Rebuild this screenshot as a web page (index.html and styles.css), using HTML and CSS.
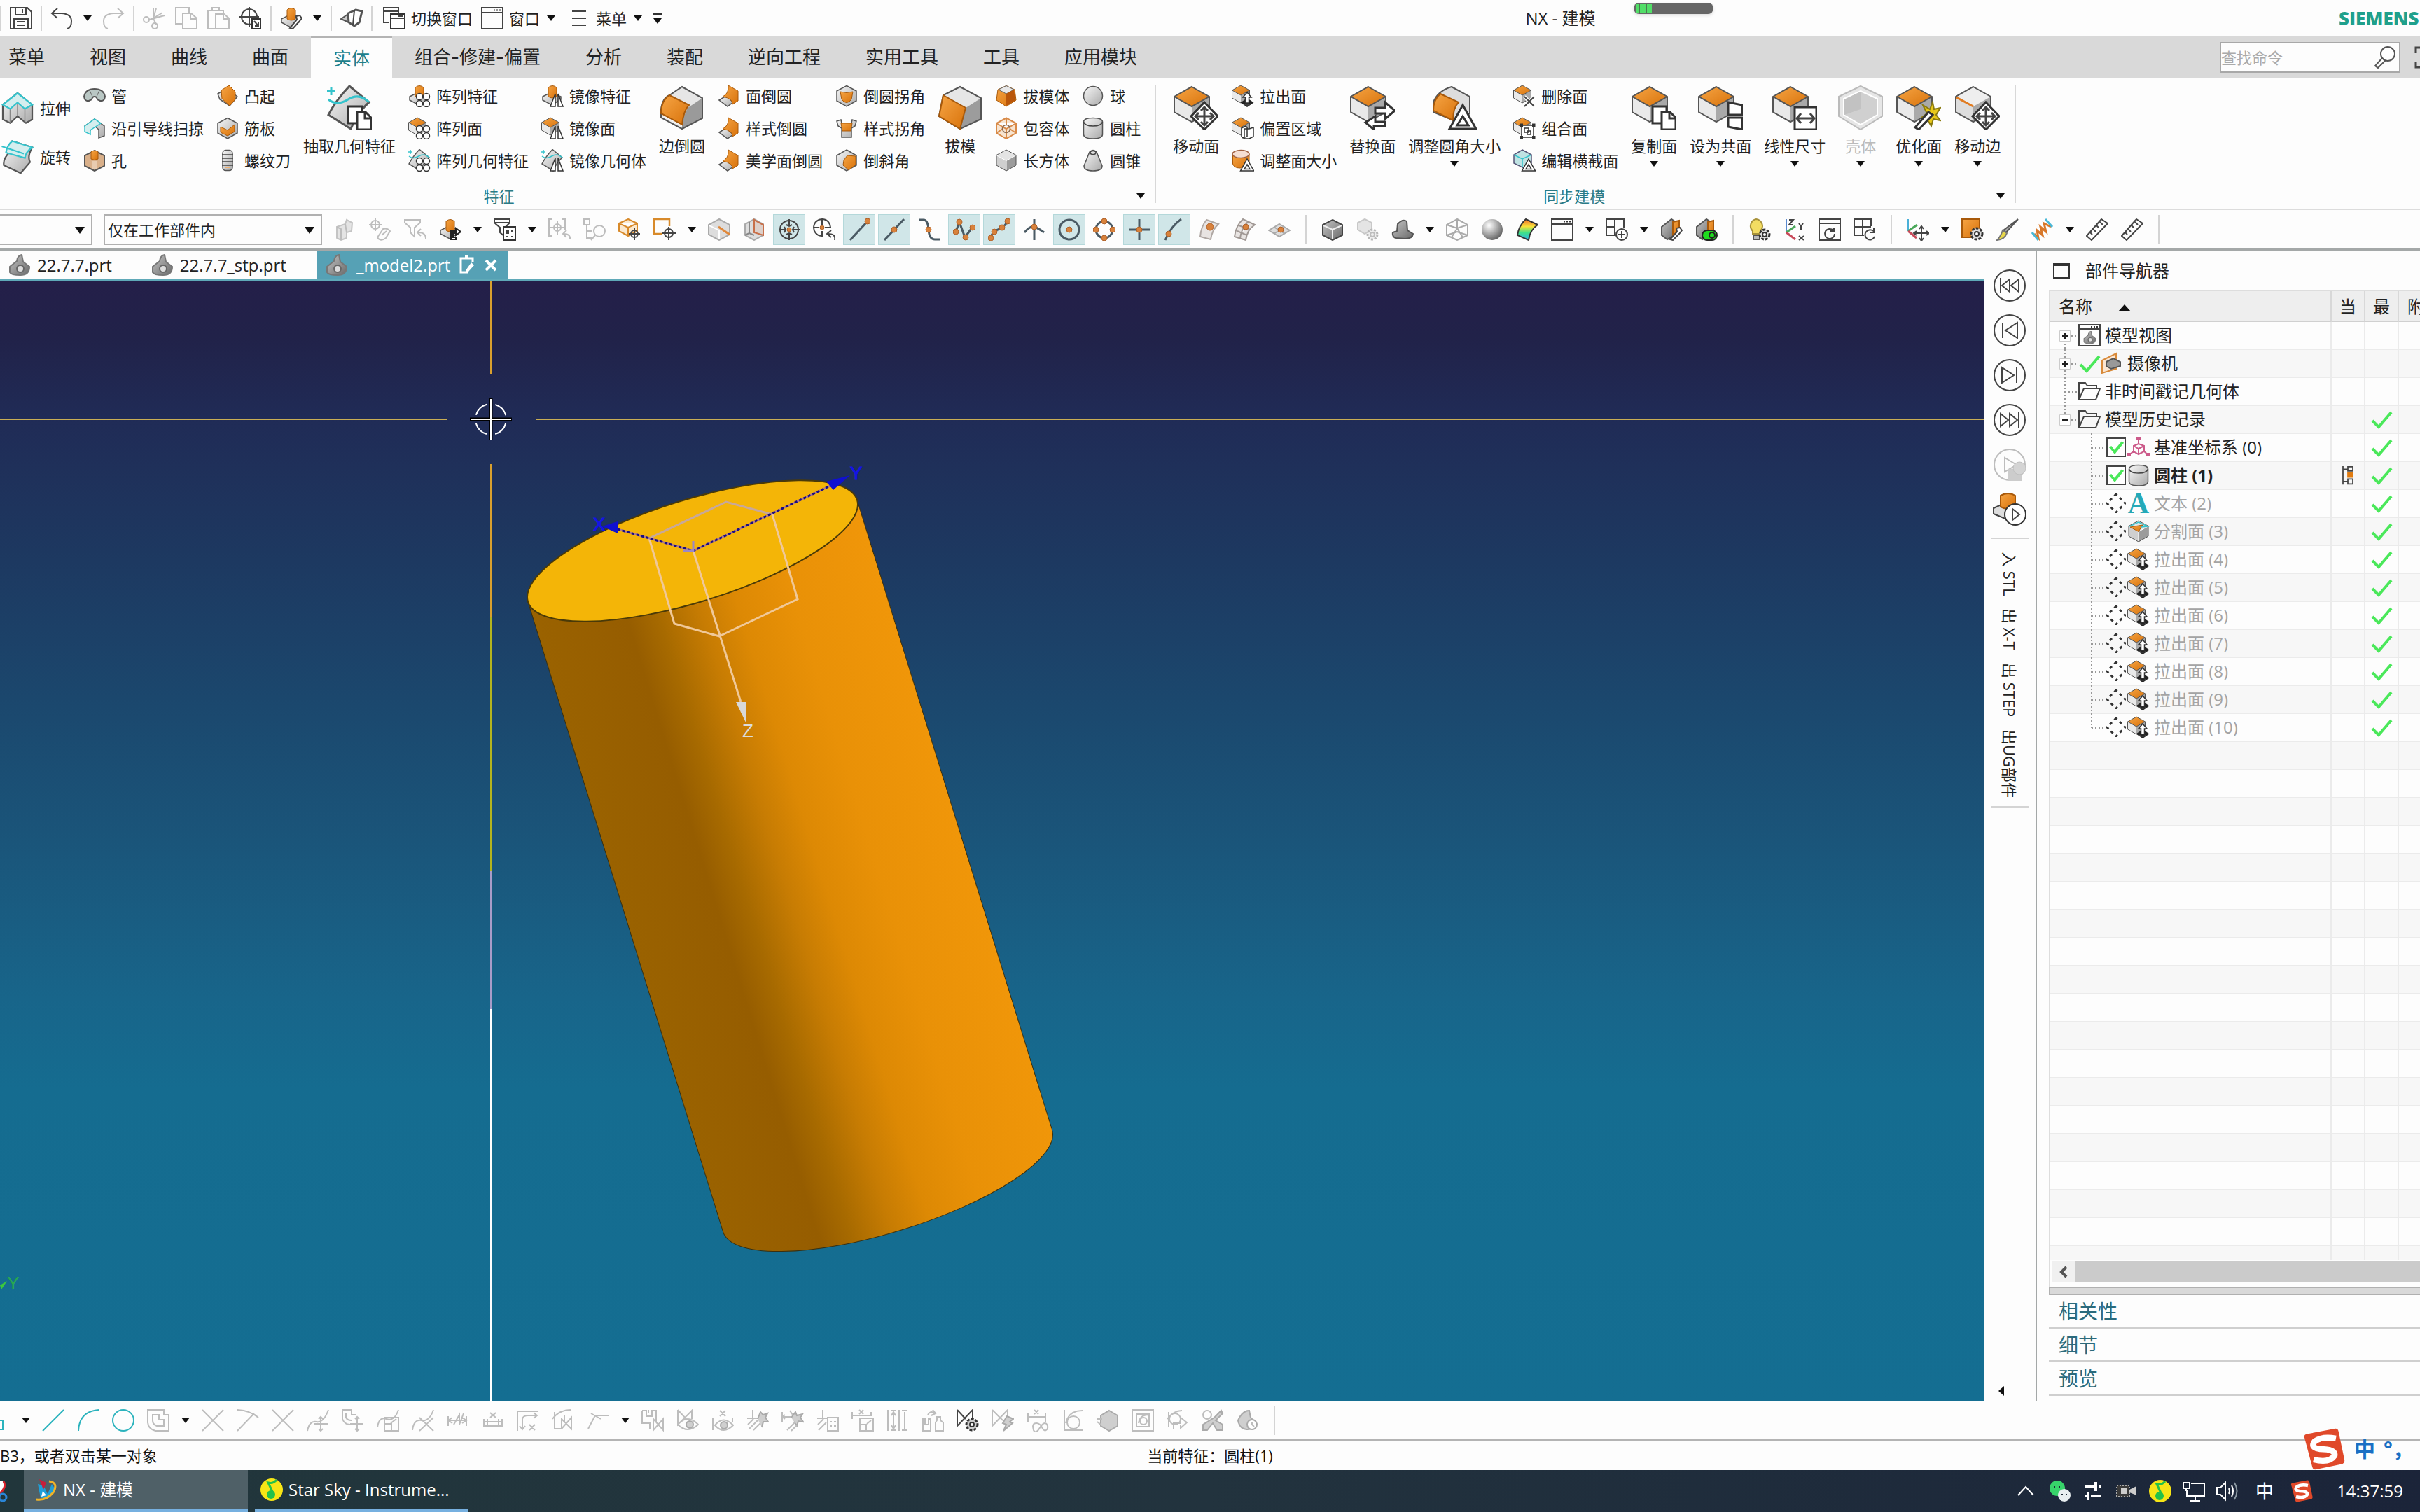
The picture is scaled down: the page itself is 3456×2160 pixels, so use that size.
FILE: index.html
```html
<!DOCTYPE html>
<html lang="zh-CN">
<head>
    <meta charset="UTF-8">
    <meta name="viewport" content="width=device-width, initial-scale=1.0">
    <title>NX - 建模</title>
    <link rel="stylesheet" href="styles.css">
</head>
<body>

    <!-- Icon library -->
    <svg class="defs" aria-hidden="true">
        <defs>
            <linearGradient id="gOrange" x1="0" y1="0" x2="1" y2="1"><stop offset="0" stop-color="#f6a545"/><stop offset="1" stop-color="#d8720a"/></linearGradient>
            <linearGradient id="gGrey" x1="0" y1="0" x2="1" y2="1"><stop offset="0" stop-color="#f8f8f8"/><stop offset="1" stop-color="#a9a9a9"/></linearGradient>
            <linearGradient id="gDark" x1="0" y1="0" x2="1" y2="1"><stop offset="0" stop-color="#c4c4c4"/><stop offset="1" stop-color="#6a6a6a"/></linearGradient>
            <linearGradient id="gRain" x1="0" y1="0" x2="0" y2="1"><stop offset="0" stop-color="#f06a2a"/><stop offset=".35" stop-color="#f7e13a"/><stop offset=".65" stop-color="#3fe08a"/><stop offset="1" stop-color="#2ab0f0"/></linearGradient>
            <radialGradient id="gBall" cx=".35" cy=".3" r=".8"><stop offset="0" stop-color="#fff"/><stop offset="1" stop-color="#555"/></radialGradient>
            <linearGradient id="gBody" x1="0" y1="0" x2="1" y2="0"><stop offset="0" stop-color="#9a6200"/><stop offset=".26" stop-color="#965d00"/><stop offset=".35" stop-color="#a76a00"/><stop offset=".47" stop-color="#c77c03"/><stop offset=".58" stop-color="#dd8904"/><stop offset=".74" stop-color="#e99107"/><stop offset="1" stop-color="#f09609"/></linearGradient>

            <!-- 64 unit feature icons -->
            <symbol id="cube" viewBox="0 0 64 64"><path class="top" d="M26 2 51 16 26 30 1 16z"/><path fill="#e9e9e9" d="M1 16 26 30V52L1 38z"/><path fill="#a9a9a9" d="M51 16 26 30V52L51 38z"/><path class="edge" d="M26 2 51 16V38L26 52 1 38V16zM1 16 26 30 51 16"/></symbol>
            <symbol id="cube-grey" viewBox="0 0 64 64"><path fill="#e4e4e4" d="M32 2 60 17 32 33 4 17z"/><path fill="#cfcfcf" d="M4 17 32 33V62L4 46z"/><path fill="#9c9c9c" d="M60 17 32 33V62L60 46z"/><path class="edge" d="M32 2 60 17V46L32 62 4 46V17z"/><path fill="none" stroke="#fff" stroke-width="2" d="M5 18 32 33 59 18M32 33V60"/></symbol>
            <symbol id="o-move" viewBox="0 0 64 64"><path class="ov" d="M44 24 63 44 44 63 25 44z"/><path class="k3" d="M44 31V57M31 44H57M39 36 44 31 49 36M39 52 44 57 49 52M36 39 31 44 36 49M52 39 57 44 52 49"/></symbol>
            <symbol id="o-pull" viewBox="0 0 64 64"><path fill="#222" d="M44 38 63 51 44 64 25 51z"/><path class="ov" d="M44 22 56 36H49V52H39V36H32z"/><path class="k3" d="M34 54Q44 62 54 54"/></symbol>
            <symbol id="o-copy" viewBox="0 0 64 64"><path class="ov" d="M30 30H50V54H30z"/><path class="ov" d="M43 38H55L63 46V63H43zM54 38V47H63"/></symbol>
            <symbol id="o-tri" viewBox="0 0 64 64"><path class="ov" d="M44 28 63 62H25z"/><path class="ov" d="M44 44 52 57H36z"/></symbol>
            <symbol id="o-grid" viewBox="0 0 64 64"><g class="ov"><circle cx="32" cy="34" r="9"/><circle cx="52" cy="34" r="9"/><circle cx="32" cy="54" r="9"/><circle cx="52" cy="54" r="9"/></g></symbol>
            <symbol id="o-mirror" viewBox="0 0 64 64"><path class="ov" d="M40 26V62H26zM48 26V62H62z"/></symbol>
            <symbol id="o-x" viewBox="0 0 64 64"><path stroke="#fff" stroke-width="10" d="M32 34 60 62M60 34 32 62"/><path stroke="#444" stroke-width="4" d="M32 34 60 62M60 34 32 62"/></symbol>
            <symbol id="boss" viewBox="0 0 64 64"><path class="grey" d="M4 34 28 22 56 34V42L30 58 4 44z"/><path class="org" d="M20 8Q32 -2 44 8V34Q32 42 20 34z"/></symbol>
            <symbol id="sheet" viewBox="0 0 64 64"><path class="grey" d="M2 42Q12 22 32 1L60 24Q44 38 34 62z"/><path class="cy" d="M6 2V14M0 8H12M2 20Q14 30 30 20T60 24"/></symbol>

            <symbol id="f-extrude" viewBox="0 0 64 64"><path class="grey" d="M4 26 32 4 60 26V54L48 61 32 48 18 61 4 54z"/><path fill="none" stroke="#888" stroke-width="2" d="M18 34V60M46 34V60M32 22V48"/><path class="cyf" d="M4 26 32 4 60 26 46 34 32 22 18 34z"/></symbol>
            <symbol id="f-revolve" viewBox="0 0 64 64"><path class="grey" d="M22 2 60 14Q50 32 56 42L38 63 6 48Q4 36 16 24z"/><path class="cyf" d="M22 2 60 14Q48 22 46 34L10 24Q12 10 22 2z"/><path class="cy" d="M2 12 44 26"/></symbol>
            <symbol id="f-tube" viewBox="0 0 64 64"><path fill="#b9c7c4" stroke="#555" stroke-width="4" d="M2 34Q6 12 32 12T62 34Q60 48 48 46L40 42Q38 34 32 34T24 42L16 46Q4 48 2 34z"/><path class="k2" d="M18 16 26 34M46 16 38 34"/></symbol>
            <symbol id="f-sweep" viewBox="0 0 64 64"><path class="grey" d="M4 26 32 6 60 26V54L44 60V36L32 26 20 38z"/><path class="cyf" d="M4 26 32 6 50 18 20 38V50L4 42z"/></symbol>
            <symbol id="f-hole" viewBox="0 0 64 64"><path fill="#d9b08a" stroke="#555" stroke-width="4" d="M32 4 60 18V48L32 62 4 48V18z"/><path class="org" d="M22 8Q32 0 42 8V28Q32 34 22 28z"/><path fill="#e8cbb0" d="M24 34H40V58H24z"/></symbol>
            <symbol id="f-emboss" viewBox="0 0 64 64"><path class="grey" d="M4 26 30 10 60 34 38 60 10 42z"/><path class="org" d="M14 16 36 2 54 20V42L38 60 16 40z"/></symbol>
            <symbol id="f-rib" viewBox="0 0 64 64"><path class="grey" d="M32 3 60 18V46L32 62 4 46V18z"/><path class="org" d="M12 28 32 38 52 22V42L32 54 12 44z"/></symbol>
            <symbol id="f-thread" viewBox="0 0 64 64"><rect class="grey" x="18" y="3" width="28" height="58" rx="9"/><path class="k3" d="M16 16H48M16 26H48M16 36H48M16 46H48"/><path stroke="#f0b070" stroke-width="4" d="M24 52H40"/></symbol>
            <symbol id="f-extract" viewBox="0 0 64 64"><use href="#sheet"/><use href="#o-copy"/></symbol>
            <symbol id="f-patf" viewBox="0 0 64 64"><use href="#boss"/><use href="#o-grid"/></symbol>
            <symbol id="f-pats" viewBox="0 0 64 64"><use href="#cube"/><use href="#o-grid"/></symbol>
            <symbol id="f-patg" viewBox="0 0 64 64"><use href="#sheet"/><use href="#o-grid"/></symbol>
            <symbol id="f-mirf" viewBox="0 0 64 64"><use href="#boss"/><use href="#o-mirror"/></symbol>
            <symbol id="f-mirs" viewBox="0 0 64 64"><use href="#cube"/><use href="#o-mirror"/></symbol>
            <symbol id="f-mirg" viewBox="0 0 64 64"><use href="#sheet"/><use href="#o-mirror"/></symbol>
            <symbol id="f-eblend" viewBox="0 0 64 64"><path fill="#e6e6e6" d="M32 2 61 18 40 32 14 14z"/><path fill="#9a9a9a" d="M61 18V47L32 62V50L40 32z"/><path fill="#eee" d="M2 42 32 58V62L2 46z"/><path class="edge" d="M32 2 61 18V47L32 62 2 46V34Q4 18 14 14z"/><path class="org" d="M14 14 42 28Q34 36 32 56L2 40Q2 22 14 14z"/></symbol>
            <symbol id="f-fblend" viewBox="0 0 64 64"><path class="grey" d="M4 44 24 32 44 50 28 62z"/><path class="org" d="M30 2 58 18V46L42 56Q44 40 14 34 32 26 30 2z"/></symbol>
            <symbol id="f-cblend" viewBox="0 0 64 64"><path class="grey" d="M32 3 60 18V46L32 62 4 46V18z"/><path class="org" d="M14 20Q32 26 50 20L46 42Q32 60 18 42z"/></symbol>
            <symbol id="f-scorner" viewBox="0 0 64 64"><path class="grey" d="M4 12 16 8 18 18H46L48 8 60 12 56 26 46 32V58H18V32L8 26z"/><path class="org" d="M16 18H48L44 40H20z"/></symbol>
            <symbol id="f-chamfer" viewBox="0 0 64 64"><path class="grey" d="M32 2 60 18V46L32 62 4 46V18z"/><path class="org" d="M34 18 58 20V44L38 60 22 46 24 32z"/></symbol>
            <symbol id="f-draft" viewBox="0 0 64 64"><path fill="#e6e6e6" d="M32 2 62 18 40 32 8 14z"/><path fill="#9c9c9c" d="M62 18V48L32 62 40 32z"/><path class="edge" d="M32 2 62 18V48L32 62 2 44 8 14z"/><path class="org" d="M8 14 40 32 32 62 2 44z"/></symbol>
            <symbol id="f-dbody" viewBox="0 0 64 64"><path class="org" d="M32 3 56 14 60 44 32 62 4 44 8 14z"/><path fill="#e8e8e8" stroke="#666" stroke-width="2" d="M32 3 54 14 32 26 10 14z"/><path fill="#b9560a" d="M32 26 54 14 58 44 32 60z"/></symbol>
            <symbol id="f-bound" viewBox="0 0 64 64"><path fill="#f7e4d0" stroke="#d88a48" stroke-width="4" d="M32 3 60 18V46L32 62 4 46V18zM4 18 32 34 60 18M32 34V62M32 3V24M4 46 22 34M60 46 42 34"/><circle cx="32" cy="34" r="11" fill="none" stroke="#8a6a50" stroke-width="3"/></symbol>
            <symbol id="f-sphere" viewBox="0 0 64 64"><circle class="grey" cx="32" cy="32" r="27"/></symbol>
            <symbol id="f-cyl" viewBox="0 0 64 64"><path class="grey" d="M5 14Q5 3 32 3T59 14V50Q59 62 32 62T5 50z"/><path class="k3" d="M5 14Q8 26 32 26T59 14"/></symbol>
            <symbol id="f-cone" viewBox="0 0 64 64"><path class="grey" d="M22 8Q32 -2 42 8L58 48Q58 62 32 62T6 48z"/><ellipse class="k3" cx="32" cy="10" rx="8" ry="5"/></symbol>

            <symbol id="f-move" viewBox="0 0 64 64"><use href="#cube"/><use href="#o-move"/></symbol>
            <symbol id="f-pull" viewBox="0 0 64 64"><use href="#cube"/><use href="#o-pull"/></symbol>
            <symbol id="f-offset" viewBox="0 0 64 64"><use href="#cube"/><path class="ov" d="M28 32 40 26 44 30V56L32 60 28 56zM36 34H50L62 30V56L50 62H36z"/></symbol>
            <symbol id="f-resize" viewBox="0 0 64 64"><path class="org" d="M3 14V42Q6 54 24 54T50 42V14z"/><ellipse cx="26" cy="14" rx="24" ry="11" fill="#f5ded2" stroke="#a06040" stroke-width="3"/><use href="#o-tri"/></symbol>
            <symbol id="f-replace" viewBox="0 0 64 64"><use href="#cube"/><path class="ov" d="M36 32H50V24L64 36 50 48V40H36zM50 52H36V44L22 53 34 63V58H50z"/></symbol>
            <symbol id="f-rblend" viewBox="0 0 64 64"><path fill="#ddd" d="M28 2 54 16V40L36 52 2 38V24Q8 8 28 2z"/><path class="edge" d="M28 2 54 16V40L36 52 2 38V24Q8 8 28 2z"/><path class="org" d="M12 12 38 24Q30 32 30 50L2 36Q2 20 12 12z"/><use href="#o-tri"/></symbol>
            <symbol id="f-delete" viewBox="0 0 64 64"><use href="#cube"/><use href="#o-x"/></symbol>
            <symbol id="f-group" viewBox="0 0 64 64"><use href="#cube"/><path class="ov" d="M24 24H58V58H24z"/><path class="ov" d="M32 32H44V44H32zM40 40H50V50H40z"/><path fill="#333" d="M19 19h9v9h-9zM54 19h9v9h-9zM19 54h9v9h-9zM54 54h9v9h-9z"/></symbol>
            <symbol id="f-section" viewBox="0 0 64 64"><path fill="#bfe3e3" stroke="#557" stroke-width="3" d="M26 2 52 16V40L30 54 2 40V16z"/><path class="cy" d="M2 16 26 28 52 16M26 28V52"/><use href="#o-tri"/></symbol>
            <symbol id="f-copy" viewBox="0 0 64 64"><use href="#cube"/><use href="#o-copy"/></symbol>
            <symbol id="f-coplanar" viewBox="0 0 64 64"><use href="#cube"/><path class="ov" d="M43 24 63 28V42H43zM43 46H63V63L43 59z"/></symbol>
            <symbol id="f-dim" viewBox="0 0 64 64"><use href="#cube"/><path class="ov" d="M32 31H63V63H32z"/><path class="k3" d="M35 47H60M41 40 35 47 41 54M54 40 60 47 54 54"/></symbol>
            <symbol id="f-shell" viewBox="0 0 64 64"><path fill="#e6e6e6" stroke="#bbb" stroke-width="2" d="M32 1 63 16V44L32 63 1 44V16z"/><path fill="#d0d0d0" stroke="#fff" stroke-width="2" d="M32 8 56 19V42L32 56 8 42V19z"/><path fill="#c2c2c2" d="M32 9V34L9 42V20z"/></symbol>
            <symbol id="f-optim" viewBox="0 0 64 64"><use href="#cube"/><path fill="#e8c81a" stroke="#8a7a10" stroke-width="2" d="M52 24 54 34 63 32 57 42 63 50 53 48 50 58 44 48 36 46 44 40 38 28 48 34z"/><path class="ov" d="M46 38 52 42 32 63 27 60z"/></symbol>
            <symbol id="f-medge" viewBox="0 0 64 64"><path fill="#eee" d="M26 2 51 16 26 30 1 16z"/><path fill="#ddd" d="M1 16 26 30V52L1 38z"/><path fill="#a9a9a9" d="M51 16 26 30V52L51 38z"/><path class="edge" d="M26 2 51 16V38L26 52 1 38V16z"/><path stroke="#e07b20" stroke-width="3" d="M2 17 26 30"/><use href="#o-move"/></symbol>
            <symbol id="f-divide" viewBox="0 0 64 64"><use href="#cube-grey"/><path class="org" d="M8 20 44 14 32 33z"/><path class="cy" d="M6 18 32 6 58 18 40 20"/></symbol>

            <!-- 32 unit line icons -->
            <symbol id="i-save" viewBox="0 0 32 32"><path class="l" d="M1 1H25L31 7V31H1z"/><path class="l" d="M8 1V11H23V1M18 3V8M6 31V17H26V31M10 21H22M10 26H22"/></symbol>
            <symbol id="i-undo" viewBox="0 0 32 32"><path class="l" d="M10 2 2 9 10 16M2 9H16Q30 10 30 20T24 31"/></symbol>
            <symbol id="i-redo" viewBox="0 0 32 32"><path class="l" d="M22 2 30 9 22 16M30 9H16Q2 10 2 20T8 31"/></symbol>
            <symbol id="i-cut" viewBox="0 0 32 32"><path class="l" d="M15 1V16L19 25M31 12 9 18"/><circle class="l" cx="5" cy="18" r="4"/><circle class="l" cx="17" cy="27" r="4"/><path class="l" d="M19 2 15 16 28 8"/></symbol>
            <symbol id="i-copy" viewBox="0 0 32 32"><path class="l" d="M20 8V1H1V24H11M11 9H23L31 16V31H11zM22 9V17H31"/></symbol>
            <symbol id="i-paste" viewBox="0 0 32 32"><path class="l" d="M11 31H1V5H23V9M7 5V1H17V5M12 10H24L31 16V31H12zM23 10V17H31"/></symbol>
            <symbol id="i-target" viewBox="0 0 32 32"><circle class="l" cx="14" cy="14" r="11"/><path class="l" d="M14 0V28M0 14H28"/><path d="M18 17H30V31H18z" fill="#fff" stroke="#333" stroke-width="2"/><path class="l" d="M21 20 27 27M27 22V27H22"/></symbol>
            <symbol id="i-bosswrench" viewBox="0 0 32 32"><use href="#boss" width="32" height="32"/><path fill="#fff" stroke="#444" stroke-width="2" d="M14 30 24 18 23 13 28 12 31 16 27 21 18 31z"/></symbol>
            <symbol id="i-pin" viewBox="0 0 32 32"><path fill="#ccc" stroke="#555" stroke-width="2" d="M1 17 11 10 12 22z"/><path fill="#fff" stroke="#555" stroke-width="3" d="M11 9 22 4 31 6 27 22 20 27 12 22z"/><path class="l" d="M20 5 18 25"/></symbol>
            <symbol id="i-windows" viewBox="0 0 32 32"><path class="l" d="M9 22H1V1H22V9M1 6H22"/><path d="M11 10H31V31H11z" fill="#fff" stroke="#333" stroke-width="2"/><path class="l" d="M11 16H31M22 13H29"/></symbol>
            <symbol id="i-window" viewBox="0 0 32 32"><path class="l" d="M1 1H31V31H1zM1 8H31"/><path class="d" d="M18 4.500H28"/></symbol>
            <symbol id="i-menu" viewBox="0 0 32 32"><path class="l" d="M6 6H26M6 16H26M6 26H26"/></symbol>
            <symbol id="i-cubes" viewBox="0 0 32 32"><path fill="#e4e4e4" stroke="#c4c4c4" stroke-width="2" d="M4 12 16 8 18 2 26 6 25 18 18 20V28L10 31 4 28z"/><path class="l" d="M16 8 18 20M4 12 10 15V31"/></symbol>
            <symbol id="i-link" viewBox="0 0 32 32"><circle class="l" cx="9" cy="9" r="6"/><path class="l" d="M9 0V18M0 9H18M12 27 20 15Q26 13 30 18L24 28Q16 34 12 27zM18 24 25 18"/></symbol>
            <symbol id="i-funnel" viewBox="0 0 32 32"><path class="l" d="M1 2H23V6L15 13V26L9 20V13L1 6zM31 30Q32 20 20 20M24 15 19 20 24 25"/></symbol>
            <symbol id="i-bossredo" viewBox="0 0 32 32"><use href="#boss" width="32" height="32"/><path fill="#fff" stroke="#222" stroke-width="2" d="M24 30H17V18H24V14L31 19 24 24V21H20V27H24z"/></symbol>
            <symbol id="i-funnellist" viewBox="0 0 32 32"><path class="l" d="M1 1H23V6L16 13V26L9 20V13L1 6zM1 6H23"/><path fill="#fff" stroke="#333" stroke-width="2" d="M14 12H31V31H14z"/><path class="l" d="M18 18H21V21H18zM18 26H21M25 18H28M25 26H28"/></symbol>
            <symbol id="i-brackets" viewBox="0 0 32 32"><path class="l" d="M5 1H1V25H5M20 1H24V16M13 3V24M3 13H22M31 30Q32 22 22 22M26 17 21 22 26 27"/><circle class="l" cx="13" cy="13" r="5"/></symbol>
            <symbol id="i-treefind" viewBox="0 0 32 32"><path class="l" d="M1 1H9V9H1zM5 9V28H12M5 18H12"/><circle class="l" cx="23" cy="18" r="8"/><path class="l" d="M17 24 11 31"/></symbol>
            <symbol id="i-cubecross" viewBox="0 0 32 32"><path fill="#fbe9cf" stroke="#d88a2a" stroke-width="2" d="M14 1 27 7V18L14 25 1 18V7zM1 7 14 13 27 7M14 13V25"/><path class="l" d="M23 14V31M15 22H31"/><circle class="l" cx="23" cy="22" r="5"/></symbol>
            <symbol id="i-rectcross" viewBox="0 0 32 32"><path fill="none" stroke="#d88a2a" stroke-width="2.500" d="M13 22H1V1H23V11"/><path class="l" d="M22 12V31M12 21H32"/><circle class="l" cx="22" cy="21" r="6"/></symbol>
            <symbol id="i-cubeline" viewBox="0 0 32 32"><path fill="#ddd" stroke="#aaa" stroke-width="2" d="M16 1 31 9V23L16 31 1 23V9z"/><path fill="none" stroke="#fff" stroke-width="2" d="M2 10 16 17V30"/><path stroke="#e0883a" stroke-width="3" d="M15 12 31 23"/></symbol>
            <symbol id="i-cubeface" viewBox="0 0 32 32"><path fill="#ddd" stroke="#aaa" stroke-width="2" d="M16 1 29 8V24L16 31 3 24V8z"/><path fill="none" stroke="#888" stroke-width="2" d="M9 5V21L3 24M9 21 16 24"/><path fill="#ddd0ca" stroke="#c8704a" stroke-width="2" d="M16 2 29 9V24L16 20z"/></symbol>
            <symbol id="i-snap" viewBox="0 0 32 32"><circle class="l" cx="16" cy="16" r="13"/><path class="l" d="M16 1V11M16 21V31M1 16H11M21 16H31M9 12 11 16 9 20M23 12 21 16 23 20M12 9 16 11 20 9M12 23 16 21 20 23"/><circle class="o" cx="16" cy="16" r="3"/></symbol>
            <symbol id="i-snapundo" viewBox="0 0 32 32"><path class="l" d="M25 14A12 12 0 1 0 12 25M13 1V9M13 18V26M1 13H9M17 13H26"/><circle class="o" cx="13" cy="13" r="3"/><path class="l" d="M31 31Q33 22 22 22M26 17 20 22 26 27"/></symbol>
            <symbol id="i-end" viewBox="0 0 32 32"><path class="b" d="M3 31 28 4"/><circle class="o" cx="28" cy="4" r="4"/></symbol>
            <symbol id="i-mid" viewBox="0 0 32 32"><path class="b" d="M2 31 30 1"/><circle class="o" cx="16" cy="16" r="4"/></symbol>
            <symbol id="i-ctrl" viewBox="0 0 32 32"><path class="b" d="M1 2H8Q14 2 15 16T24 30H31"/><circle class="o" cx="15" cy="16" r="4"/></symbol>
            <symbol id="i-poly" viewBox="0 0 32 32"><path class="b" d="M4 19 9 5 17 27 28 12"/><circle class="o" cx="9" cy="5" r="4"/><circle class="o" cx="4" cy="19" r="4"/><circle class="o" cx="18" cy="27" r="4"/><circle class="o" cx="28" cy="13" r="4"/></symbol>
            <symbol id="i-spline" viewBox="0 0 32 32"><path class="b" d="M4 28Q6 18 14 16T28 4"/><circle class="o" cx="4" cy="28" r="4"/><circle class="o" cx="9" cy="19" r="4"/><circle class="o" cx="20" cy="13" r="4"/><circle class="o" cx="28" cy="4" r="4"/></symbol>
            <symbol id="i-inter" viewBox="0 0 32 32"><path class="b" d="M2 20Q10 10 16 12T30 20M16 1V31"/><circle class="o" cx="16" cy="12" r="4"/></symbol>
            <symbol id="i-center" viewBox="0 0 32 32"><circle class="b" cx="16" cy="16" r="14"/><circle class="o" cx="16" cy="16" r="4"/></symbol>
            <symbol id="i-quad" viewBox="0 0 32 32"><circle class="b" cx="16" cy="16" r="12"/><circle class="o" cx="16" cy="4" r="4"/><circle class="o" cx="16" cy="28" r="4"/><circle class="o" cx="4" cy="16" r="4"/><circle class="o" cx="28" cy="16" r="4"/></symbol>
            <symbol id="i-cross" viewBox="0 0 32 32"><path class="b" d="M16 1V31M1 16H31"/><circle class="o" cx="16" cy="16" r="4"/></symbol>
            <symbol id="i-tan" viewBox="0 0 32 32"><path class="b" d="M3 31Q12 10 26 1"/><circle class="o" cx="8" cy="22" r="4"/></symbol>
            <symbol id="i-face1" viewBox="0 0 32 32"><path fill="#e8e4e2" stroke="#b0a8a4" stroke-width="2" d="M3 26Q4 12 12 2L29 8Q20 16 18 30z"/><circle class="o" cx="17" cy="12" r="5"/></symbol>
            <symbol id="i-face2" viewBox="0 0 32 32"><path fill="#e8e4e2" stroke="#a09894" stroke-width="2" d="M2 26Q4 10 14 1L31 9Q20 16 18 31zM8 10 25 16M6 18 20 24M21 5Q12 14 10 28"/><circle class="o" cx="18" cy="12" r="4"/></symbol>
            <symbol id="i-face3" viewBox="0 0 32 32"><path fill="#ddd" stroke="#aaa" stroke-width="2" d="M1 17 16 8 31 17 16 26zM8 12 24 22M24 12 8 22"/><circle class="o" cx="18" cy="16" r="4"/></symbol>
            <symbol id="i-cubedark" viewBox="0 0 32 32"><path fill="url(#gDark)" stroke="#444" stroke-width="2" d="M16 2 30 9V24L16 31 2 24V9z"/><path fill="none" stroke="#eee" stroke-width="2" d="M3 10 16 16 29 10M16 16V29"/></symbol>
            <symbol id="i-cubegear" viewBox="0 0 32 32"><path fill="#e4e4e4" stroke="#c8c8c8" stroke-width="2" d="M12 1 22 6V16L12 22 2 16V6z"/><circle fill="#eee" stroke="#b8b8b8" stroke-width="3" stroke-dasharray="3 2" cx="23" cy="23" r="7"/><circle class="l" cx="23" cy="23" r="3"/></symbol>
            <symbol id="i-seat" viewBox="0 0 32 32"><path fill="url(#gDark)" stroke="#555" stroke-width="2" d="M9 8Q16 0 22 4L23 17 31 22Q30 29 20 29L6 28Q1 26 2 20L8 18z"/></symbol>
            <symbol id="i-wire" viewBox="0 0 32 32"><path class="l" d="M16 1 31 9V24L16 31 1 24V9zM1 9 16 14 31 9M16 1V14M16 14 8 27M16 14 24 27M1 24 16 19 31 24"/></symbol>
            <symbol id="i-ball" viewBox="0 0 32 32"><circle cx="16" cy="16" r="15" fill="url(#gBall)"/></symbol>
            <symbol id="i-rain" viewBox="0 0 32 32"><path fill="url(#gRain)" stroke="#333" stroke-width="2" d="M2 24Q4 10 14 1L31 9Q20 16 18 31z"/></symbol>
            <symbol id="i-gridplus" viewBox="0 0 32 32"><path class="l" d="M15 24H1V1H26V13M13 1V24M1 12H14"/><circle cx="23" cy="23" r="8" fill="#fff" stroke="#444" stroke-width="2"/><path class="l" d="M23 18V28M18 23H28"/></symbol>
            <symbol id="i-clip" viewBox="0 0 32 32"><path fill="url(#gDark)" stroke="#555" stroke-width="2" d="M2 12 16 1 22 5V24L10 30 2 24z"/><path class="org" d="M18 5 27 3V20L18 24z"/><path fill="#fff" stroke="#444" stroke-width="2" d="M14 30 24 19 23 14 28 13 31 17 27 22 18 31z"/></symbol>
            <symbol id="i-clipon" viewBox="0 0 32 32"><path fill="url(#gDark)" stroke="#555" stroke-width="2" d="M2 12 16 1 22 5V24L10 30 2 24z"/><path class="org" d="M18 5 26 3V20L18 24z"/><rect x="10" y="17" width="21" height="14" rx="7" fill="#1fdc1f" stroke="#222" stroke-width="2"/><circle cx="24" cy="24" r="4" fill="#1fdc1f" stroke="#222" stroke-width="2"/></symbol>
            <symbol id="i-bulb" viewBox="0 0 32 32"><path fill="#f3dc62" stroke="#a8923a" stroke-width="2" d="M11 1A10 10 0 0 1 17 18V22H6V18A10 10 0 0 1 11 1z"/><path fill="#bbb" stroke="#555" stroke-width="2" d="M7 24H16V30H7z"/><circle cx="23" cy="23" r="7" fill="#ddd" stroke="#333" stroke-width="3" stroke-dasharray="4 2"/><circle cx="23" cy="23" r="3" fill="#fff" stroke="#333" stroke-width="2"/></symbol>
            <symbol id="i-csys" viewBox="0 0 32 32"><path fill="none" stroke="#5a8ad0" stroke-width="2" d="M4 1V20"/><path fill="none" stroke="#4aa85a" stroke-width="3" d="M4 20 17 11"/><path fill="none" stroke="#c84a5a" stroke-width="3" d="M4 20 17 30"/><path class="l" d="M8 2H14L8 9H14M22 7 25 11 28 7M25 11V16M22 25 29 31M29 25 22 31"/></symbol>
            <symbol id="i-winrot" viewBox="0 0 32 32"><path class="l" d="M1 1H31V31H1zM1 7H31M22 13V18H17M21 17A7 7 0 1 0 23 22"/></symbol>
            <symbol id="i-gridrot" viewBox="0 0 32 32"><path class="l" d="M15 24H1V1H25V11M13 1V24M1 12H25M29 14V20H23M28 18A7 7 0 1 0 30 26"/></symbol>
            <symbol id="i-csysmove" viewBox="0 0 32 32"><path fill="none" stroke="#4ab0d8" stroke-width="2" d="M2 1V18"/><path fill="none" stroke="#4aa85a" stroke-width="3" d="M2 18 15 9"/><path fill="none" stroke="#c84a5a" stroke-width="3" d="M2 18 14 28"/><path class="l" d="M21 12V31M11 21H31M18 15 21 11 24 15M18 28 21 32 24 28M14 18 10 21 14 24M28 18 32 21 28 24"/></symbol>
            <symbol id="i-facegear" viewBox="0 0 32 32"><path class="org" d="M1 1H26V27H1z"/><circle cx="22" cy="22" r="8" fill="#ddd" stroke="#333" stroke-width="3" stroke-dasharray="4 2"/><circle cx="22" cy="22" r="3" fill="#fff" stroke="#333" stroke-width="2"/></symbol>
            <symbol id="i-brush" viewBox="0 0 32 32"><path fill="#aaa" stroke="#555" stroke-width="2" d="M31 1 14 20 10 17z"/><path fill="#e8d84a" stroke="#777" stroke-width="2" d="M9 17 15 21Q12 30 1 31 6 26 9 17z"/></symbol>
            <symbol id="i-spring" viewBox="0 0 32 32"><path fill="none" stroke="#d8782a" stroke-width="3" d="M4 22 10 28 8 17 16 24 13 12 21 19 18 7 28 12"/><path fill="none" stroke="#49b8d8" stroke-width="3" d="M1 20 10 31M20 1 30 12"/></symbol>
            <symbol id="i-ruler" viewBox="0 0 32 32"><path class="l" d="M22 1 31 7 8 31 1 25zM20 5 24 9M15 10 18 13M10 15 14 19M6 20 9 23"/></symbol>

            <!-- sketch tools -->
            <symbol id="k-rect" viewBox="0 0 32 32"><path class="l" d="M1 16H22V29H1z"/></symbol>
            <symbol id="k-line" viewBox="0 0 32 32"><path class="l" d="M1 31 31 1"/></symbol>
            <symbol id="k-arc" viewBox="0 0 32 32"><path class="l" d="M2 31Q3 3 31 1"/></symbol>
            <symbol id="k-circle" viewBox="0 0 32 32"><circle class="l" cx="16" cy="16" r="15"/></symbol>
            <symbol id="k-offset" viewBox="0 0 32 32"><path class="l" d="M1 1H24V8H31V31H12Q1 28 1 18zM8 8H17V15H24V24H14Q8 22 8 16z"/></symbol>
            <symbol id="k-trim" viewBox="0 0 32 32"><path class="l" d="M1 1 31 31M31 1 1 31"/></symbol>
            <symbol id="k-extend" viewBox="0 0 32 32"><path class="l" d="M1 1Q20 2 31 12M25 6 1 31"/></symbol>
            <symbol id="k-movecurve" viewBox="0 0 32 32"><path class="l" d="M1 31Q4 16 14 18T31 1M20 11V31M11 21H31M17 14 20 11 23 14M17 28 20 31 23 28"/></symbol>
            <symbol id="k-offmove" viewBox="0 0 32 32"><path class="l" d="M1 1H14V8H20M1 1V14Q4 22 12 22M6 6V12Q8 16 14 16M22 11V31M12 21H31M19 14 22 11 25 14M19 28 22 31 25 28"/></symbol>
            <symbol id="k-resize" viewBox="0 0 32 32"><path class="l" d="M1 26Q3 10 14 14T31 1M11 12H31V31H11zM11 21H21V31M20 20 28 14"/></symbol>
            <symbol id="k-delcurve" viewBox="0 0 32 32"><path class="l" d="M1 30Q3 14 14 16T31 1M11 12 31 31M31 12 11 31"/></symbol>
            <symbol id="k-dim" viewBox="0 0 32 32"><path class="l" d="M2 10V24M28 10V24M2 16H28M8 12 2 16 8 20M22 12 28 16 22 20M10 22 18 8V22L24 6"/></symbol>
            <symbol id="k-dimbar" viewBox="0 0 32 32"><path class="l" d="M3 14V24H29V14M3 18H29M8 14V22M24 14V22M12 5 20 12M20 5 12 12"/></symbol>
            <symbol id="k-corner" viewBox="0 0 32 32"><path class="l" d="M1 31V3H30M8 28V14Q9 9 16 9H28M24 5 29 9 24 13M4 24 8 29 12 24M18 22 26 30M26 22 18 30"/></symbol>
            <symbol id="k-mirror" viewBox="0 0 32 32"><path class="l" d="M4 4V28H14V12M1 14Q10 1 28 1M14 14 28 28V12L14 28M18 8V18"/></symbol>
            <symbol id="k-angle" viewBox="0 0 32 32"><path class="l" d="M2 28 12 9H31M6 6 20 14"/></symbol>
            <symbol id="k-connect" viewBox="0 0 32 32"><path class="l" d="M1 2H7V10H15V2H21V18M1 2V20H12V28M10 1V6M17 14 31 30V14L17 30z"/></symbol>
            <symbol id="k-boweye" viewBox="0 0 32 32"><path class="l" d="M2 1V22L22 2V14M2 1 14 14M2 22Q16 6 31 22 16 36 2 22z"/><circle class="g" cx="19" cy="22" r="5"/></symbol>
            <symbol id="k-xeye" viewBox="0 0 32 32"><path class="l" d="M12 2 20 10M20 2 12 10M2 12V30M30 12V18M5 23Q17 8 31 23 17 37 5 23z"/><circle class="g" cx="18" cy="23" r="5"/></symbol>
            <symbol id="k-hatch" viewBox="0 0 32 32"><path class="l" d="M9 1V13M1 13H18M2 22 10 14M4 28 16 16M10 30 22 18"/><path class="g" d="M16 14 20 4 24 8 30 6 27 12 31 18 24 18 22 26"/></symbol>
            <symbol id="k-dimstar" viewBox="0 0 32 32"><path class="l" d="M1 4V18M1 11H14M5 8 1 11 5 14M12 2 16 8"/><path class="g" d="M14 12 20 4 22 9 30 7 27 12 31 18 24 17 22 24 18 18"/><path class="l" d="M8 30 20 18M14 31 22 23"/></symbol>
            <symbol id="k-hatchlist" viewBox="0 0 32 32"><path class="l" d="M9 1V13M1 13H16M2 22 10 14M3 30 14 19M16 12H31V31H16zM20 18H22M20 24H22M25 18H28M25 24H28"/></symbol>
            <symbol id="k-dimsize" viewBox="0 0 32 32"><path class="l" d="M1 4V14M28 4V10M1 9H28M11 1 17 7M17 1 11 7M12 13H31V31H12zM12 22H21V31M22 21 28 16"/></symbol>
            <symbol id="k-updown" viewBox="0 0 32 32"><path class="l" d="M2 1V31M18 1V31M10 4V28M26 4V28M6 2H14M6 30H14M22 2H30M22 30H30M7 9 10 4 13 9M7 23 10 28 13 23"/></symbol>
            <symbol id="k-bottles" viewBox="0 0 32 32"><path class="l" d="M2 14H5V22H10V14H13V31H2zM22 11H27V16L31 19V31H20V19L22 16zM9 8Q13 1 19 6M16 1 20 6 14 9"/></symbol>
            <symbol id="k-bowgear" viewBox="0 0 32 32"><path class="l" d="M1 1V24L23 1V12M1 1 13 14"/><circle cx="22" cy="22" r="8" fill="#ccc" stroke="#333" stroke-width="3" stroke-dasharray="4 2"/><circle cx="22" cy="22" r="3" fill="#fff" stroke="#333" stroke-width="2"/></symbol>
            <symbol id="k-bowbolt" viewBox="0 0 32 32"><path class="l" d="M1 1V24L23 1V10M1 1 16 16"/><path class="g" d="M22 10 31 14 26 18 30 20 17 31 21 22 16 20z"/></symbol>
            <symbol id="k-xloop" viewBox="0 0 32 32"><path class="l" d="M2 5V18M27 5V18M2 11H27M11 1 17 7M17 1 11 7M9 25Q9 20 14 20T22 26 28 30 30 24 26 20 18 28 10 30z"/></symbol>
            <symbol id="k-cornercircle" viewBox="0 0 32 32"><path class="l" d="M4 1V30H30M6 20Q10 2 30 2"/><circle class="l" cx="17" cy="19" r="9"/></symbol>
            <symbol id="k-cube" viewBox="0 0 32 32"><path class="g" d="M18 2 30 9V24L18 31 6 24V9z"/><path class="l" d="M1 14H8M1 18 6 22"/></symbol>
            <symbol id="k-square" viewBox="0 0 32 32"><path class="l" d="M1 1H31V31H1zM7 7V25H25V7zM10 20Q12 8 24 8"/><circle class="l" cx="17" cy="17" r="5"/></symbol>
            <symbol id="k-goto" viewBox="0 0 32 32"><path class="l" d="M3 4V26M1 14Q10 2 22 2M10 28V20H20V12L29 19 20 27V22"/><circle class="l" cx="12" cy="14" r="8"/></symbol>
            <symbol id="k-tools" viewBox="0 0 32 32"><path class="g" d="M2 22 18 12 28 2 30 6 20 16 30 22V30H22L16 20 8 30H2z"/><circle class="l" cx="8" cy="8" r="6"/></symbol>
            <symbol id="k-leaf" viewBox="0 0 32 32"><path class="g" d="M2 16Q8 2 18 2L20 12 28 20Q24 30 14 29 4 28 2 16z"/><circle cx="22" cy="22" r="7" fill="#fff" stroke="#aaa" stroke-width="2"/><path class="l" d="M22 18V22L25 25"/></symbol>

            <!-- shell, tree and tray -->
            <symbol id="t-part" viewBox="0 0 32 32"><path fill="url(#gDark)" stroke="#777" stroke-width="2" d="M2 18 12 10Q13 2 19 1L21 11 30 18Q30 30 17 30T2 26z"/><circle cx="17" cy="21" r="5" fill="#ddd" stroke="#666" stroke-width="2"/></symbol>
            <symbol id="t-modify" viewBox="0 0 24 32"><path fill="none" stroke="#fff" stroke-width="3" d="M20 12V6H3V26H14M9 3H14"/><path fill="#fff" d="M18 12 22 16 14 25 10 26 11 22z"/></symbol>
            <symbol id="t-close" viewBox="0 0 20 20"><path fill="none" stroke="#fff" stroke-width="4" d="M3 3 17 17M17 3 3 17"/></symbol>
            <symbol id="t-first" viewBox="0 0 48 48"><circle class="l" cx="24" cy="24" r="22"/><path class="l" d="M11 13V35M24 15 13 24 24 33zM37 15 26 24 37 33z"/></symbol>
            <symbol id="t-prev" viewBox="0 0 48 48"><circle class="l" cx="24" cy="24" r="22"/><path class="l" d="M14 13V35M35 13 18 24 35 35z"/></symbol>
            <symbol id="t-next" viewBox="0 0 48 48"><circle class="l" cx="24" cy="24" r="22"/><path class="l" d="M34 13V35M13 13 30 24 13 35z"/></symbol>
            <symbol id="t-last" viewBox="0 0 48 48"><circle class="l" cx="24" cy="24" r="22"/><path class="l" d="M37 13V35M11 15 22 24 11 33zM24 15 35 24 24 33z"/></symbol>
            <symbol id="t-stop" viewBox="0 0 48 48"><circle class="l" cx="24" cy="24" r="22"/><path class="l" d="M17 14 34 24 17 34z"/><path fill="#ccc" d="M22 30H42V47H22z"/><circle cx="38" cy="29" r="9" fill="#d4d4d4" stroke="#c0c0c0"/></symbol>
            <symbol id="t-play" viewBox="0 0 48 48"><path fill="#ddd" stroke="#444" stroke-width="2" d="M1 22 14 16 34 24V32L20 38 1 30z"/><path class="org" d="M11 4Q22 -2 32 4V20Q22 26 11 20z"/><circle cx="32" cy="31" r="15" fill="#fff" stroke="#333" stroke-width="2"/><path class="l" d="M28 23 38 31 28 39z"/></symbol>

            <symbol id="n-plus" viewBox="0 0 40 40"><path class="dot" d="M21 12V40M30 21H40"/><path fill="#fff" stroke="#ccc" d="M13.500 13.500H28.500V28.500H13.500z"/><path stroke="#222" stroke-width="2" d="M17 21H26M21 17V26"/></symbol>
            <symbol id="n-plus-mid" viewBox="0 0 40 40"><path class="dot" d="M21 0V40M30 21H40"/><path fill="#fff" stroke="#ccc" d="M13.500 13.500H28.500V28.500H13.500z"/><path stroke="#222" stroke-width="2" d="M17 21H26M21 17V26"/></symbol>
            <symbol id="n-twig" viewBox="0 0 40 40"><path class="dot" d="M21 0V40M21 21H40"/></symbol>
            <symbol id="n-minus" viewBox="0 0 40 40"><path class="dot" d="M21 0V12M30 21H40"/><path fill="#fff" stroke="#ccc" d="M13.500 13.500H28.500V28.500H13.500z"/><path stroke="#222" stroke-width="2" d="M17 21H26"/></symbol>
            <symbol id="n-branch" viewBox="0 0 80 40"><path class="dot" d="M59 0V40M59 21H80"/></symbol>
            <symbol id="n-last" viewBox="0 0 80 40"><path class="dot" d="M59 0V21M59 21H80"/></symbol>
            <symbol id="n-check" viewBox="0 0 32 32"><path fill="none" stroke="#4ae85a" stroke-width="4" d="M3 18 12 27 30 6"/></symbol>
            <symbol id="n-off" viewBox="0 0 28 28"><path fill="none" stroke="#333" stroke-width="3" stroke-dasharray="4 5" stroke-dashoffset="2" d="M14 1 27 14 14 27 1 14z"/></symbol>
            <symbol id="n-view" viewBox="0 0 32 32"><path class="l" d="M1 1H31V31H1zM1 7H31"/><path class="d" d="M18 4H28"/><use href="#t-part" x="7" y="10" width="19" height="19"/></symbol>
            <symbol id="n-cam" viewBox="0 0 32 32"><path fill="#fbe6d2" stroke="#d88a3a" stroke-width="2" d="M2 12 22 2V24L2 30z"/><path fill="#999" stroke="#555" stroke-width="2" d="M8 14 18 9 28 14V20L15 24 8 20z"/></symbol>
            <symbol id="n-folder" viewBox="0 0 32 32"><path class="l" d="M1 28V4H10L13 8H26V12M1 28 8 12H31L25 28z"/></symbol>
            <symbol id="n-datum" viewBox="0 0 32 32"><path fill="none" stroke="#cc5a8a" stroke-width="2" d="M16 3V12M9 14 16 11 24 14V22L16 26 9 22zM9 14 16 18 24 14M16 18V26M9 22 2 27M24 22 30 27"/><path fill="#cc5a8a" d="M13 1h6v5h-6zM0 24h5v5H0zM27 24h5v5h-5z"/></symbol>
            <symbol id="n-hist" viewBox="0 0 20 32"><path class="l" d="M2 1V31M2 6H9M2 26H9M10 2H18V9H10zM10 22H18V30H10z"/><path fill="#e07b10" d="M9 11h10v9H9z"/></symbol>

            <symbol id="y-up" viewBox="0 0 32 32"><path fill="none" stroke="#fff" stroke-width="2" d="M5 22 16 10 27 22"/></symbol>
            <symbol id="y-chat" viewBox="0 0 32 32"><circle cx="13" cy="12" r="11" fill="#37d36a"/><circle cx="23" cy="22" r="9" fill="#e8eef0"/><path stroke="#1b2a35" stroke-width="2" d="M9 9v3M16 9v3M20 20v2M26 20v2"/></symbol>
            <symbol id="y-mix" viewBox="0 0 32 32"><path fill="none" stroke="#fff" stroke-width="4" d="M4 10H19M20 3V16M25 10H28M4 23H8M9 17V29M13 23H28"/></symbol>
            <symbol id="y-dev" viewBox="0 0 32 32"><path fill="#3a3a3a" stroke="#aaa" stroke-width="2" stroke-dasharray="2 2" d="M2 8H20V24H2z"/><path fill="#ccc" d="M8 12H17V20H8zM20 14 30 9V22L20 18z"/></symbol>
            <symbol id="y-music" viewBox="0 0 32 32"><circle cx="16" cy="16" r="16" fill="#f7e516"/><circle cx="15" cy="23" r="6" fill="#24c14a"/><path fill="none" stroke="#24c14a" stroke-width="3" d="M19 23 11 6Q18 8 23 2"/></symbol>
            <symbol id="y-net" viewBox="0 0 32 32"><path fill="none" stroke="#fff" stroke-width="2" d="M12 5H31V23H6V14M18 23V30M11 30H25M1 4H10V12H1zM5 12V16"/></symbol>
            <symbol id="y-vol" viewBox="0 0 32 32"><path fill="none" stroke="#fff" stroke-width="2" d="M1 11H6L13 4V28L6 21H1zM18 12Q20 16 18 20M22 8Q26 16 22 24"/><path fill="none" stroke="#8a97a0" stroke-width="2" d="M26 4Q33 16 26 28"/></symbol>
            <symbol id="y-sogou" viewBox="0 0 64 64"><path fill="#e0492a" d="M2 14Q1 10 6 9L48 1Q53 0 54 5L63 48Q64 53 59 55L20 63Q15 64 14 59z"/><path fill="none" stroke="#fff" stroke-width="9" d="M50 16Q30 12 18 20 10 30 26 32 50 32 48 42 40 54 16 48"/></symbol>
            <symbol id="y-nx" viewBox="0 0 32 32"><path fill="#1f9fd8" d="M4 8 12 10 18 22 24 8 28 14 20 28 8 28z"/><path fill="#c81e3a" d="M6 1 16 6 12 16z"/><path fill="none" stroke="#f0b429" stroke-width="3" d="M20 4Q34 6 26 20 16 32 2 30"/><path fill="#fff" d="M11 18 16 24 9 26z"/></symbol>
            <symbol id="y-cut" viewBox="0 0 32 32"><path fill="#fff" d="M14 2H24Q28 10 20 20L14 16z"/><path fill="none" stroke="#d8202a" stroke-width="3" d="M25 2Q30 10 20 19"/><circle cx="24" cy="25" r="5" fill="none" stroke="#2a86d8" stroke-width="3"/></symbol>
        </defs>
    </svg>

    <!-- Quick access bar -->
    <header class="titlebar">
        <div class="quick">
            <span class="sep"></span>
            <button class="qb" aria-label="保存"><svg class="i32"><use href="#i-save"/></svg></button>
            <span class="sep"></span>
            <button class="qb" aria-label="撤销"><svg class="i32"><use href="#i-undo"/></svg></button>
            <button class="caret" aria-label="撤销列表"></button>
            <button class="qb off" aria-label="重做"><svg class="i32"><use href="#i-redo"/></svg></button>
            <span class="sep"></span>
            <button class="qb off" aria-label="剪切"><svg class="i32"><use href="#i-cut"/></svg></button>
            <button class="qb off" aria-label="复制"><svg class="i32"><use href="#i-copy"/></svg></button>
            <button class="qb off" aria-label="粘贴"><svg class="i32"><use href="#i-paste"/></svg></button>
            <button class="qb" aria-label="重复命令"><svg class="i32"><use href="#i-target"/></svg></button>
            <span class="sep"></span>
            <button class="qb" aria-label="特征工具"><svg class="i32"><use href="#i-bosswrench"/></svg></button>
            <button class="caret" aria-label="更多特征工具"></button>
            <span class="sep"></span>
            <button class="qb" aria-label="触控"><svg class="i32"><use href="#i-pin"/></svg></button>
            <span class="sep"></span>
            <button class="qb wide"><svg class="i32"><use href="#i-windows"/></svg>切换窗口</button>
            <button class="qb wide"><svg class="i32"><use href="#i-window"/></svg>窗口</button>
            <button class="caret" aria-label="窗口列表"></button>
            <button class="qb wide"><svg class="i32"><use href="#i-menu"/></svg>菜单</button>
            <button class="caret" aria-label="菜单列表"></button>
            <button class="caret bar" aria-label="自定义"></button>
        </div>
        <h1 class="app-title">NX - 建模</h1>
        <div class="brand">SIEMENS</div>
        <div class="battery"></div>
    </header>

    <!-- Ribbon tabs -->
    <nav class="tabs">
        <button class="tab">菜单</button>
        <button class="tab">视图</button>
        <button class="tab">曲线</button>
        <button class="tab">曲面</button>
        <button class="tab active">实体</button>
        <button class="tab">组合-修建-偏置</button>
        <button class="tab">分析</button>
        <button class="tab">装配</button>
        <button class="tab">逆向工程</button>
        <button class="tab">实用工具</button>
        <button class="tab">工具</button>
        <button class="tab">应用模块</button>
        <div class="search">
            <input type="text" placeholder="查找命令" aria-label="查找命令">
            <svg class="search-icon" viewBox="0 0 32 32"><circle cx="20" cy="11" r="10" fill="#fff" stroke="#555" stroke-width="2"/><path fill="#fff" stroke="#555" stroke-width="2" d="M12 17 16 21 6 31 2 28z"/></svg>
        </div>
        <svg class="full" viewBox="0 0 32 32"><path fill="none" stroke="#444" stroke-width="3" d="M10 2H2V10M22 2H30V10M10 30H2V22M22 30H30V22"/></svg>
    </nav>

    <!-- Ribbon -->
    <section class="ribbon">
        <div class="group scrolled">
            <div class="tools">
                <div class="stack tall">
                    <button class="cmd"><svg class="i48"><use href="#f-extrude"/></svg>拉伸</button>
                    <button class="cmd"><svg class="i48"><use href="#f-revolve"/></svg>旋转</button>
                </div>
                <div class="stack">
                    <button class="cmd"><svg class="i32"><use href="#f-tube"/></svg>管</button>
                    <button class="cmd"><svg class="i32"><use href="#f-sweep"/></svg>沿引导线扫掠</button>
                    <button class="cmd"><svg class="i32"><use href="#f-hole"/></svg>孔</button>
                </div>
                <div class="stack">
                    <button class="cmd"><svg class="i32"><use href="#f-emboss"/></svg>凸起</button>
                    <button class="cmd"><svg class="i32"><use href="#f-rib"/></svg>筋板</button>
                    <button class="cmd"><svg class="i32"><use href="#f-thread"/></svg>螺纹刀</button>
                </div>
                <button class="big"><svg class="i64"><use href="#f-extract"/></svg>抽取几何特征</button>
                <div class="stack">
                    <button class="cmd"><svg class="i32"><use href="#f-patf"/></svg>阵列特征</button>
                    <button class="cmd"><svg class="i32"><use href="#f-pats"/></svg>阵列面</button>
                    <button class="cmd"><svg class="i32"><use href="#f-patg"/></svg>阵列几何特征</button>
                </div>
                <div class="stack">
                    <button class="cmd"><svg class="i32"><use href="#f-mirf"/></svg>镜像特征</button>
                    <button class="cmd"><svg class="i32"><use href="#f-mirs"/></svg>镜像面</button>
                    <button class="cmd"><svg class="i32"><use href="#f-mirg"/></svg>镜像几何体</button>
                </div>
                <button class="big"><svg class="i64"><use href="#f-eblend"/></svg>边倒圆</button>
                <div class="stack">
                    <button class="cmd"><svg class="i32"><use href="#f-fblend"/></svg>面倒圆</button>
                    <button class="cmd"><svg class="i32"><use href="#f-fblend"/></svg>样式倒圆</button>
                    <button class="cmd"><svg class="i32"><use href="#f-fblend"/></svg>美学面倒圆</button>
                </div>
                <div class="stack">
                    <button class="cmd"><svg class="i32"><use href="#f-cblend"/></svg>倒圆拐角</button>
                    <button class="cmd"><svg class="i32"><use href="#f-scorner"/></svg>样式拐角</button>
                    <button class="cmd"><svg class="i32"><use href="#f-chamfer"/></svg>倒斜角</button>
                </div>
                <button class="big"><svg class="i64"><use href="#f-draft"/></svg>拔模</button>
                <div class="stack">
                    <button class="cmd"><svg class="i32"><use href="#f-dbody"/></svg>拔模体</button>
                    <button class="cmd"><svg class="i32"><use href="#f-bound"/></svg>包容体</button>
                    <button class="cmd"><svg class="i32"><use href="#cube-grey"/></svg>长方体</button>
                </div>
                <div class="stack">
                    <button class="cmd"><svg class="i32"><use href="#f-sphere"/></svg>球</button>
                    <button class="cmd"><svg class="i32"><use href="#f-cyl"/></svg>圆柱</button>
                    <button class="cmd"><svg class="i32"><use href="#f-cone"/></svg>圆锥</button>
                </div>
            </div>
            <div class="group-foot"><span>特征</span><button class="caret" aria-label="特征选项"></button></div>
        </div>
        <div class="group">
            <div class="tools">
                <button class="big"><svg class="i64"><use href="#f-move"/></svg>移动面</button>
                <div class="stack">
                    <button class="cmd"><svg class="i32"><use href="#f-pull"/></svg>拉出面</button>
                    <button class="cmd"><svg class="i32"><use href="#f-offset"/></svg>偏置区域</button>
                    <button class="cmd"><svg class="i32"><use href="#f-resize"/></svg>调整面大小</button>
                </div>
                <button class="big"><svg class="i64"><use href="#f-replace"/></svg>替换面</button>
                <button class="big more"><svg class="i64"><use href="#f-rblend"/></svg>调整圆角大小</button>
                <div class="stack">
                    <button class="cmd"><svg class="i32"><use href="#f-delete"/></svg>删除面</button>
                    <button class="cmd"><svg class="i32"><use href="#f-group"/></svg>组合面</button>
                    <button class="cmd"><svg class="i32"><use href="#f-section"/></svg>编辑横截面</button>
                </div>
                <button class="big more"><svg class="i64"><use href="#f-copy"/></svg>复制面</button>
                <button class="big more"><svg class="i64"><use href="#f-coplanar"/></svg>设为共面</button>
                <button class="big more"><svg class="i64"><use href="#f-dim"/></svg>线性尺寸</button>
                <button class="big more dim"><svg class="i64"><use href="#f-shell"/></svg>壳体</button>
                <button class="big more"><svg class="i64"><use href="#f-optim"/></svg>优化面</button>
                <button class="big more"><svg class="i64"><use href="#f-medge"/></svg>移动边</button>
            </div>
            <div class="group-foot"><span>同步建模</span><button class="caret" aria-label="同步建模选项"></button></div>
        </div>
    </section>

    <!-- Selection bar -->
    <section class="selbar">
        <div class="pick pick-type"><select aria-label="类型过滤器"><option></option></select></div>
        <div class="pick pick-scope"><select aria-label="选择范围"><option>仅在工作部件内</option></select></div>
        <div class="strip">
            <button class="tool off" aria-label="选择组"><svg class="i32"><use href="#i-cubes"/></svg></button>
            <button class="tool off" aria-label="链接"><svg class="i32"><use href="#i-link"/></svg></button>
            <button class="tool off" aria-label="重置过滤器"><svg class="i32"><use href="#i-funnel"/></svg></button>
            <button class="tool" aria-label="特征选择"><svg class="i32"><use href="#i-bossredo"/></svg></button>
            <button class="caret" aria-label="特征选择列表"></button>
            <button class="tool" aria-label="详细过滤"><svg class="i32"><use href="#i-funnellist"/></svg></button>
            <button class="caret" aria-label="过滤列表"></button>
            <button class="tool off" aria-label="取消选择"><svg class="i32"><use href="#i-brackets"/></svg></button>
            <button class="tool off" aria-label="在导航器中查找"><svg class="i32"><use href="#i-treefind"/></svg></button>
            <button class="tool" aria-label="部件内选择"><svg class="i32"><use href="#i-cubecross"/></svg></button>
            <button class="tool" aria-label="矩形选择"><svg class="i32"><use href="#i-rectcross"/></svg></button>
            <button class="caret" aria-label="选择手势"></button>
            <button class="tool" aria-label="边"><svg class="i32"><use href="#i-cubeline"/></svg></button>
            <button class="tool" aria-label="面"><svg class="i32"><use href="#i-cubeface"/></svg></button>
            <button class="tool on" aria-label="启用捕捉点"><svg class="i32"><use href="#i-snap"/></svg></button>
            <button class="tool" aria-label="清除捕捉点"><svg class="i32"><use href="#i-snapundo"/></svg></button>
            <button class="tool on" aria-label="端点"><svg class="i32"><use href="#i-end"/></svg></button>
            <button class="tool on" aria-label="中点"><svg class="i32"><use href="#i-mid"/></svg></button>
            <button class="tool" aria-label="控制点"><svg class="i32"><use href="#i-ctrl"/></svg></button>
            <button class="tool on" aria-label="极点"><svg class="i32"><use href="#i-poly"/></svg></button>
            <button class="tool on" aria-label="样条点"><svg class="i32"><use href="#i-spline"/></svg></button>
            <button class="tool" aria-label="交点"><svg class="i32"><use href="#i-inter"/></svg></button>
            <button class="tool on" aria-label="圆弧中心"><svg class="i32"><use href="#i-center"/></svg></button>
            <button class="tool" aria-label="象限点"><svg class="i32"><use href="#i-quad"/></svg></button>
            <button class="tool on" aria-label="现有点"><svg class="i32"><use href="#i-cross"/></svg></button>
            <button class="tool on" aria-label="曲线上的点"><svg class="i32"><use href="#i-tan"/></svg></button>
            <button class="tool" aria-label="面上的点"><svg class="i32"><use href="#i-face1"/></svg></button>
            <button class="tool" aria-label="小平面点"><svg class="i32"><use href="#i-face2"/></svg></button>
            <button class="tool" aria-label="栅格点"><svg class="i32"><use href="#i-face3"/></svg></button>
            <span class="sep"></span>
            <button class="tool" aria-label="带边着色"><svg class="i32"><use href="#i-cubedark"/></svg></button>
            <button class="tool off" aria-label="显示设置"><svg class="i32"><use href="#i-cubegear"/></svg></button>
            <button class="tool" aria-label="视图方向"><svg class="i32"><use href="#i-seat"/></svg></button>
            <button class="caret" aria-label="视图方向列表"></button>
            <button class="tool light" aria-label="线框"><svg class="i32"><use href="#i-wire"/></svg></button>
            <button class="tool" aria-label="艺术外观"><svg class="i32"><use href="#i-ball"/></svg></button>
            <button class="tool" aria-label="面分析"><svg class="i32"><use href="#i-rain"/></svg></button>
            <button class="tool" aria-label="背景"><svg class="i32"><use href="#i-window"/></svg></button>
            <button class="caret" aria-label="背景列表"></button>
            <button class="tool" aria-label="布局"><svg class="i32"><use href="#i-gridplus"/></svg></button>
            <button class="caret" aria-label="布局列表"></button>
            <button class="tool" aria-label="编辑截面"><svg class="i32"><use href="#i-clip"/></svg></button>
            <button class="tool" aria-label="剪切截面"><svg class="i32"><use href="#i-clipon"/></svg></button>
            <span class="sep"></span>
            <button class="tool" aria-label="显示和隐藏"><svg class="i32"><use href="#i-bulb"/></svg></button>
            <button class="tool" aria-label="显示 WCS"><svg class="i32"><use href="#i-csys"/></svg></button>
            <button class="tool" aria-label="刷新"><svg class="i32"><use href="#i-winrot"/></svg></button>
            <button class="tool" aria-label="更新布局"><svg class="i32"><use href="#i-gridrot"/></svg></button>
            <span class="sep"></span>
            <button class="tool" aria-label="WCS 动态"><svg class="i32"><use href="#i-csysmove"/></svg></button>
            <button class="caret" aria-label="WCS 列表"></button>
            <button class="tool" aria-label="图层设置"><svg class="i32"><use href="#i-facegear"/></svg></button>
            <button class="tool" aria-label="编辑对象显示"><svg class="i32"><use href="#i-brush"/></svg></button>
            <button class="tool" aria-label="弹簧"><svg class="i32"><use href="#i-spring"/></svg></button>
            <button class="caret" aria-label="弹簧列表"></button>
            <button class="tool" aria-label="测量"><svg class="i32"><use href="#i-ruler"/></svg></button>
            <button class="tool" aria-label="测量距离"><svg class="i32"><use href="#i-ruler"/></svg></button>
            <span class="sep"></span>
        </div>
    </section>

    <main class="work">
        <!-- Graphics window -->
        <section class="stage">
            <div class="docs">
                <button class="doc"><svg class="i32"><use href="#t-part"/></svg>22.7.7.prt</button>
                <button class="doc"><svg class="i32"><use href="#t-part"/></svg>22.7.7_stp.prt</button>
                <button class="doc current"><svg class="i32"><use href="#t-part"/></svg>_model2.prt <svg class="doc-mod"><use href="#t-modify"/></svg><svg class="doc-x"><use href="#t-close"/></svg></button>
            </div>
            <div class="viewport">
                <svg class="scene" viewBox="0 0 2834 1600" preserveAspectRatio="xMinYMin slice">
                    <g fill="none" stroke-width="2">
                        <path stroke="#c9ae55" d="M0 197H638M765 197H2834"/>
                        <path stroke="#d9a02e" d="M701 0V133M701 261V480"/>
                        <path stroke="#b4b41e" d="M701 480V842"/>
                        <path stroke="#a99cc8" d="M701 842V1040"/>
                        <path stroke="#fff" d="M701 1040V1600"/>
                    </g>
                    <g transform="translate(989 385) rotate(-17.2)">
                        <path fill="url(#gBody)" stroke="#3a3010" stroke-width="1" d="M-246 0V942A246 73 0 0 0 246 942V0z"/>
                        <ellipse rx="246" ry="73" fill="#f4b507" stroke="#4a3a08" stroke-width="2"/>
                    </g>
                    <g fill="none" stroke="#c8a89a" stroke-width="3">
                        <path d="M927 367 1037 315 1103 333"/>
                        <path stroke="#f0c898" d="M927 367 963 489 1027 507 1139 454 1103 333M990 385 1058 601"/>
                        <path stroke="#b07a8a" d="M875 352 990 385 1192 289"/>
                        <path stroke="#1a0e80" stroke-dasharray="4 3" d="M875 352 990 385 1192 289"/>
                        <path stroke="#9a88c8" d="M990 371V385H976"/>
                    </g>
                    <path fill="#1010d0" d="M860 350 882 343V360zM1180 286 1214 277 1190 298z"/>
                    <path fill="#d8d8d8" d="M1051 601H1065L1066 632z"/>
                    <g class="axis">
                        <text class="blue" x="847" y="356">X</text>
                        <text class="blue" x="1214" y="283">Y</text>
                        <text x="1060" y="651" fill="#dcdcdc">Z</text>
                        <text x="10" y="1440" fill="#28a850">Y</text>
                    </g>
                    <path fill="#3cc83c" d="M0 1434 10 1428 2 1440z"/>
                    <g fill="none" stroke="#fff" stroke-width="2">
                        <path stroke="#000" stroke-width="5" d="M701 167V227M671 197H731"/>
                        <path d="M701 168V226M672 197H730"/>
                        <circle cx="701" cy="197" r="22" stroke-dasharray="22 12.500" stroke-dashoffset="-6"/>
                    </g>
                </svg>
            </div>
        </section>

        <!-- Playback bar -->
        <aside class="rail">
            <button class="round" aria-label="第一个特征"><svg><use href="#t-first"/></svg></button>
            <button class="round" aria-label="上一个特征"><svg><use href="#t-prev"/></svg></button>
            <button class="round" aria-label="下一个特征"><svg><use href="#t-next"/></svg></button>
            <button class="round" aria-label="最后一个特征"><svg><use href="#t-last"/></svg></button>
            <button class="round off" aria-label="停止"><svg><use href="#t-stop"/></svg></button>
            <button class="round" aria-label="播放"><svg><use href="#t-play"/></svg></button>
            <div class="exports">
                <button class="export">入 STL</button>
                <button class="export">出 X-T</button>
                <button class="export">出 STEP</button>
                <button class="export">出UG部件</button>
            </div>
            <span class="rail-more"></span>
        </aside>

        <!-- Part navigator -->
        <aside class="navigator">
            <h2 class="nav-title"><span class="pin-box"></span>部件导航器</h2>
            <div class="grid">
                <table>
                    <thead>
                        <tr><th class="name">名称<span class="sort"></span></th><th>当</th><th>最</th><th>附</th></tr>
                    </thead>
                    <tbody>
                        <tr><td><div class="node"><svg class="lv1"><use href="#n-plus"/></svg><svg class="i32"><use href="#n-view"/></svg><span>模型视图</span></div></td><td></td><td></td><td></td></tr>
                        <tr><td><div class="node"><svg class="lv1"><use href="#n-plus-mid"/></svg><svg class="i32"><use href="#n-check"/></svg><svg class="i32"><use href="#n-cam"/></svg><span>摄像机</span></div></td><td></td><td></td><td></td></tr>
                        <tr><td><div class="node"><svg class="lv1"><use href="#n-twig"/></svg><svg class="i32"><use href="#n-folder"/></svg><span>非时间戳记几何体</span></div></td><td></td><td></td><td></td></tr>
                        <tr><td><div class="node"><svg class="lv1"><use href="#n-minus"/></svg><svg class="i32"><use href="#n-folder"/></svg><span>模型历史记录</span></div></td><td></td><td><svg class="i32"><use href="#n-check"/></svg></td><td></td></tr>
                        <tr><td><label class="node"><svg class="lv2"><use href="#n-branch"/></svg><input type="checkbox" checked><svg class="i32"><use href="#n-datum"/></svg><span>基准坐标系 (0)</span></label></td><td></td><td><svg class="i32"><use href="#n-check"/></svg></td><td></td></tr>
                        <tr><td><label class="node strong"><svg class="lv2"><use href="#n-branch"/></svg><input type="checkbox" checked><svg class="i32"><use href="#f-cyl"/></svg><span>圆柱 (1)</span></label></td><td><svg class="hist"><use href="#n-hist"/></svg></td><td><svg class="i32"><use href="#n-check"/></svg></td><td></td></tr>
                        <tr><td><div class="node faded"><svg class="lv2"><use href="#n-branch"/></svg><svg class="i28"><use href="#n-off"/></svg><b class="letter">A</b><span>文本 (2)</span></div></td><td></td><td><svg class="i32"><use href="#n-check"/></svg></td><td></td></tr>
                        <tr><td><div class="node faded"><svg class="lv2"><use href="#n-branch"/></svg><svg class="i28"><use href="#n-off"/></svg><svg class="i32"><use href="#f-divide"/></svg><span>分割面 (3)</span></div></td><td></td><td><svg class="i32"><use href="#n-check"/></svg></td><td></td></tr>
                        <tr><td><div class="node faded"><svg class="lv2"><use href="#n-branch"/></svg><svg class="i28"><use href="#n-off"/></svg><svg class="i32"><use href="#f-pull"/></svg><span>拉出面 (4)</span></div></td><td></td><td><svg class="i32"><use href="#n-check"/></svg></td><td></td></tr>
                        <tr><td><div class="node faded"><svg class="lv2"><use href="#n-branch"/></svg><svg class="i28"><use href="#n-off"/></svg><svg class="i32"><use href="#f-pull"/></svg><span>拉出面 (5)</span></div></td><td></td><td><svg class="i32"><use href="#n-check"/></svg></td><td></td></tr>
                        <tr><td><div class="node faded"><svg class="lv2"><use href="#n-branch"/></svg><svg class="i28"><use href="#n-off"/></svg><svg class="i32"><use href="#f-pull"/></svg><span>拉出面 (6)</span></div></td><td></td><td><svg class="i32"><use href="#n-check"/></svg></td><td></td></tr>
                        <tr><td><div class="node faded"><svg class="lv2"><use href="#n-branch"/></svg><svg class="i28"><use href="#n-off"/></svg><svg class="i32"><use href="#f-pull"/></svg><span>拉出面 (7)</span></div></td><td></td><td><svg class="i32"><use href="#n-check"/></svg></td><td></td></tr>
                        <tr><td><div class="node faded"><svg class="lv2"><use href="#n-branch"/></svg><svg class="i28"><use href="#n-off"/></svg><svg class="i32"><use href="#f-pull"/></svg><span>拉出面 (8)</span></div></td><td></td><td><svg class="i32"><use href="#n-check"/></svg></td><td></td></tr>
                        <tr><td><div class="node faded"><svg class="lv2"><use href="#n-branch"/></svg><svg class="i28"><use href="#n-off"/></svg><svg class="i32"><use href="#f-pull"/></svg><span>拉出面 (9)</span></div></td><td></td><td><svg class="i32"><use href="#n-check"/></svg></td><td></td></tr>
                        <tr><td><div class="node faded"><svg class="lv2"><use href="#n-last"/></svg><svg class="i28"><use href="#n-off"/></svg><svg class="i32"><use href="#f-pull"/></svg><span>拉出面 (10)</span></div></td><td></td><td><svg class="i32"><use href="#n-check"/></svg></td><td></td></tr>
                    </tbody>
                </table>
                <div class="blank"></div>
            </div>
            <div class="hscroll"><svg viewBox="0 0 34 30"><path fill="none" stroke="#555" stroke-width="4" d="M21 8 14 15 21 22"/></svg><span></span></div>
            <div class="splitter"></div>
            <button class="panel">相关性</button>
            <button class="panel">细节</button>
            <button class="panel">预览</button>
        </aside>
    </main>

    <!-- Sketch toolbar -->
    <section class="sketchbar strip">
        <button class="tool teal" aria-label="矩形"><svg class="i32"><use href="#k-rect"/></svg></button>
        <button class="caret" aria-label="矩形列表"></button>
        <button class="tool teal" aria-label="直线"><svg class="i32"><use href="#k-line"/></svg></button>
        <button class="tool teal" aria-label="圆弧"><svg class="i32"><use href="#k-arc"/></svg></button>
        <button class="tool teal" aria-label="圆"><svg class="i32"><use href="#k-circle"/></svg></button>
        <button class="tool off" aria-label="偏置曲线"><svg class="i32"><use href="#k-offset"/></svg></button>
        <button class="caret" aria-label="曲线列表"></button>
        <button class="tool off" aria-label="修剪"><svg class="i32"><use href="#k-trim"/></svg></button>
        <button class="tool off" aria-label="延伸"><svg class="i32"><use href="#k-extend"/></svg></button>
        <button class="tool off" aria-label="拐角"><svg class="i32"><use href="#k-trim"/></svg></button>
        <button class="tool off" aria-label="移动曲线"><svg class="i32"><use href="#k-movecurve"/></svg></button>
        <button class="tool off" aria-label="偏置移动"><svg class="i32"><use href="#k-offmove"/></svg></button>
        <button class="tool off" aria-label="调整曲线大小"><svg class="i32"><use href="#k-resize"/></svg></button>
        <button class="tool off" aria-label="删除曲线"><svg class="i32"><use href="#k-delcurve"/></svg></button>
        <button class="tool off" aria-label="快速尺寸"><svg class="i32"><use href="#k-dim"/></svg></button>
        <button class="tool off" aria-label="线性尺寸"><svg class="i32"><use href="#k-dimbar"/></svg></button>
        <button class="tool off" aria-label="周长尺寸"><svg class="i32"><use href="#k-corner"/></svg></button>
        <button class="tool off" aria-label="镜像曲线"><svg class="i32"><use href="#k-mirror"/></svg></button>
        <button class="tool off" aria-label="几何约束"><svg class="i32"><use href="#k-angle"/></svg></button>
        <button class="caret" aria-label="约束列表"></button>
        <button class="tool off" aria-label="设为对称"><svg class="i32"><use href="#k-connect"/></svg></button>
        <button class="tool off" aria-label="显示约束"><svg class="i32"><use href="#k-boweye"/></svg></button>
        <button class="tool off" aria-label="显示尺寸"><svg class="i32"><use href="#k-xeye"/></svg></button>
        <button class="tool off" aria-label="自动约束"><svg class="i32"><use href="#k-hatch"/></svg></button>
        <button class="tool off" aria-label="自动尺寸"><svg class="i32"><use href="#k-dimstar"/></svg></button>
        <button class="tool off" aria-label="约束列表"><svg class="i32"><use href="#k-hatchlist"/></svg></button>
        <button class="tool off" aria-label="动画尺寸"><svg class="i32"><use href="#k-dimsize"/></svg></button>
        <button class="tool off" aria-label="转换参考"><svg class="i32"><use href="#k-updown"/></svg></button>
        <button class="tool off" aria-label="备选解"><svg class="i32"><use href="#k-bottles"/></svg></button>
        <button class="tool" aria-label="推断约束设置"><svg class="i32"><use href="#k-bowgear"/></svg></button>
        <button class="tool off" aria-label="创建推断约束"><svg class="i32"><use href="#k-bowbolt"/></svg></button>
        <button class="tool off" aria-label="连续自动尺寸"><svg class="i32"><use href="#k-xloop"/></svg></button>
        <button class="tool off" aria-label="草图"><svg class="i32"><use href="#k-cornercircle"/></svg></button>
        <button class="tool off" aria-label="定向到模型"><svg class="i32"><use href="#k-cube"/></svg></button>
        <button class="tool off" aria-label="定向到草图"><svg class="i32"><use href="#k-square"/></svg></button>
        <button class="tool off" aria-label="重新附着"><svg class="i32"><use href="#k-goto"/></svg></button>
        <button class="tool off" aria-label="评估草图"><svg class="i32"><use href="#k-tools"/></svg></button>
        <button class="tool off" aria-label="更新模型"><svg class="i32"><use href="#k-leaf"/></svg></button>
        <span class="sep"></span>
    </section>

    <footer class="status">
        <p class="hint">B3，或者双击某一对象</p>
        <p>当前特征：圆柱(1)</p>
        <div class="ime"><svg><use href="#y-sogou"/></svg><span>中</span><span>°，</span></div>
    </footer>

    <!-- Desktop taskbar -->
    <footer class="taskbar">
        <button class="task-icon" aria-label="截图工具"><svg class="i32"><use href="#y-cut"/></svg></button>
        <button class="task front"><svg class="i32"><use href="#y-nx"/></svg>NX - 建模</button>
        <button class="task"><svg class="i32"><use href="#y-music"/></svg>Star Sky - Instrume...</button>
        <div class="tray">
            <svg class="i32"><use href="#y-up"/></svg>
            <svg class="i32"><use href="#y-chat"/></svg>
            <svg class="i32"><use href="#y-mix"/></svg>
            <svg class="i32"><use href="#y-dev"/></svg>
            <svg class="i32"><use href="#y-music"/></svg>
            <svg class="i32"><use href="#y-net"/></svg>
            <svg class="i32"><use href="#y-vol"/></svg>
            <span class="lang">中</span>
            <svg class="i32"><use href="#y-sogou"/></svg>
            <time>14:37:59</time>
        </div>
    </footer>

</body>
</html>
```
FILE: styles.css
```css
* {
    box-sizing: border-box;
}

body {
    margin: 0;
    height: 100vh;
    display: flex;
    flex-direction: column;
    overflow: hidden;
    background: #fdfdfd;
    color: #222;
    font-family: "Open Sans", "Noto Sans CJK SC", sans-serif;
    font-size: 22px;
    line-height: 32px;
}

button {
    display: flex;
    align-items: center;
    flex: none;
    margin: 0;
    padding: 0;
    border: none;
    background: none;
    color: inherit;
    font: inherit;
    white-space: nowrap;
    cursor: pointer;
}

h1, h2, p {
    margin: 0;
    font-size: 22px;
    font-weight: normal;
}

svg {
    flex: none;
    display: block;
}

.defs {
    position: absolute;
    width: 0;
    height: 0;
}

.i28 { width: 28px; height: 28px; }
.i32 { width: 32px; height: 32px; }
.i48 { width: 48px; height: 48px; }
.i64 { width: 64px; height: 64px; }

/* icon paint */
.l { fill: none; stroke: var(--line, #444); stroke-width: 2; }
.b { fill: none; stroke: #4a5a64; stroke-width: 3; }
.d { fill: none; stroke: #333; stroke-width: 2; stroke-dasharray: 2 2; }
.o { fill: #d8823c; stroke: #b0622a; stroke-width: 1; }
.g { fill: #cfcfcf; stroke: #aaa; stroke-width: 2; }
.k2 { fill: none; stroke: #666; stroke-width: 2; }
.k3 { fill: none; stroke: #444; stroke-width: 3; }
.top { fill: url(#gOrange); }
.org { fill: url(#gOrange); stroke: #a8590a; stroke-width: 2; }
.grey { fill: url(#gGrey); stroke: #555; stroke-width: 3; }
.edge { fill: none; stroke: #555; stroke-width: 2; }
.ov { fill: #fff; stroke: #333; stroke-width: 3; }
.cy { fill: none; stroke: #35c3cc; stroke-width: 3; }
.cyf { fill: #d5eeee; stroke: #35c3cc; stroke-width: 3; }
.dot { fill: none; stroke: #999; stroke-width: 2; stroke-dasharray: 2 3; }

.off { --line: #bdbdbd; }
.light { --line: #aaa; }
.teal { --line: #2bb3bd; }

/* shared toolbar pieces */
.caret {
    width: 24px;
    height: 24px;
    justify-content: center;
}

.caret::before {
    content: "";
    border: 6px solid transparent;
    border-top: 8px solid #111;
    border-bottom: none;
}

.caret.bar {
    flex-direction: column;
    gap: 4px;
}

.caret.bar::before {
    order: 2;
}

.caret.bar::after {
    content: "";
    order: 1;
    width: 14px;
    height: 3px;
    background: #333;
}

.sep {
    flex: none;
    width: 22px;
    height: 42px;
    background: linear-gradient(#d4d4d4, #d4d4d4) center / 2px 100% no-repeat;
}

.strip {
    display: flex;
    align-items: center;
    gap: 4px;
}

.tool {
    width: 46px;
    height: 44px;
    justify-content: center;
}

.tool.on {
    background: #d0e6e8;
    border: 1px solid #b4d8da;
}

/* title bar */
.titlebar {
    position: relative;
    display: flex;
    align-items: center;
    height: 52px;
}

.quick {
    display: flex;
    align-items: center;
    gap: 4px;
    margin-left: -3px;
}

.quick .sep {
    width: 8px;
    height: 36px;
}

.qb {
    min-width: 42px;
    justify-content: center;
}

.qb.wide {
    gap: 8px;
    padding-left: 8px;
}

.app-title {
    flex: 1;
    margin-left: 166px;
    font-size: 24px;
    text-align: center;
}

.brand {
    width: 116px;
    color: #1fa08c;
    font-size: 26px;
    font-weight: 800;
}

.battery {
    position: absolute;
    top: 4px;
    left: 67.5%;
    width: 114px;
    height: 16px;
    border-radius: 8px;
    background: repeating-linear-gradient(90deg, #4a7a50 0 1px, #52de68 1px 5px) 3px 2px / 23px 12px no-repeat #666;
    box-shadow: 0 2px 4px #ddd;
}

/* tabs */
.tabs {
    display: flex;
    align-items: center;
    height: 60px;
    background: #d9d9d9;
}

.tab {
    height: 60px;
    padding: 0 32px;
    font-family: Inter, "Noto Sans CJK SC", sans-serif;
    font-size: 26px;
}

.tab:first-child {
    margin-left: -20px;
}

.tab.active {
    background: #fdfdfd;
    border-top: 3px solid #b4b4b4;
    color: #1c7f8c;
}

.search {
    display: flex;
    width: 258px;
    height: 44px;
    margin-left: auto;
    padding: 0 4px 0 0;
    align-items: center;
    background: #fdfdfd;
    border: 2px solid #a8a8a8;
}

.search input {
    flex: 1;
    min-width: 0;
    padding: 0;
    border: none;
    background: none;
    font: inherit;
}

.search input::placeholder {
    color: #aaa;
}

.search-icon {
    width: 32px;
    height: 32px;
}

.full {
    width: 32px;
    height: 32px;
    margin: 0 -24px 0 20px;
}

/* ribbon */
.ribbon {
    display: flex;
    height: 188px;
    border-bottom: 2px solid #dcdcdc;
}

.group {
    display: flex;
    flex-direction: column;
    position: relative;
    padding-left: 24px;
}

.group::after {
    content: "";
    position: absolute;
    right: 0;
    top: 10px;
    bottom: 8px;
    border-right: 2px solid #d8d8d8;
}

.group.scrolled {
    margin-left: -192px;
    padding-left: 193px;
}

.tools {
    display: flex;
    flex: 1;
    gap: 18px;
    padding: 2px 22px 0 0;
}

.stack {
    display: flex;
    flex-direction: column;
}

.cmd {
    height: 46px;
    gap: 8px;
}

.tall {
    padding-top: 5px;
}

.tall .cmd {
    height: 70px;
}

.big {
    flex-direction: column;
    gap: 6px;
    padding-top: 8px;
    height: 140px;
    min-width: 64px;
}

.big.more::after {
    content: "";
    border: 6px solid transparent;
    border-top: 8px solid #111;
    border-bottom: none;
}

.big.dim {
    color: #bbb;
}

.group-foot {
    display: flex;
    align-items: center;
    height: 36px;
    margin-left: -24px;
    padding-right: 10px;
    color: #2a7a86;
}

.scrolled .group-foot {
    margin-left: -193px;
}

.group-foot span {
    flex: 1;
    text-align: center;
}

/* selection bar */
.selbar {
    display: flex;
    align-items: center;
    gap: 16px;
    height: 58px;
    border-bottom: 3px solid #a4a8a8;
}

.pick {
    position: relative;
    height: 44px;
    border: 2px solid #b0b0b0;
}

.pick-type {
    width: 132px;
    border-left: none;
}

.pick-scope {
    width: 312px;
}

.pick::after {
    content: "";
    position: absolute;
    right: 9px;
    top: 16px;
    border: 7px solid transparent;
    border-top: 10px solid #111;
    border-bottom: none;
    pointer-events: none;
}

.pick select {
    appearance: none;
    width: 100%;
    height: 100%;
    padding: 0 4px;
    border: none;
    background: none;
    color: inherit;
    font: inherit;
}

.selbar .strip {
    margin-left: -6px;
}

/* work area */
.work {
    display: flex;
    flex: 1;
    min-height: 0;
}

.stage {
    display: flex;
    flex-direction: column;
    flex: 1;
    min-width: 0;
}

.docs {
    display: flex;
    height: 44px;
    border-bottom: 3px solid #5fa9b8;
}

.doc {
    gap: 9px;
    padding: 0 44px 0 12px;
    font-size: 24px;
}

.doc.current {
    gap: 12px;
    padding-right: 14px;
    background: #56a1b5;
    color: #fff;
}

.doc-mod {
    width: 24px;
    height: 32px;
}

.doc-x {
    width: 20px;
    height: 20px;
}

.viewport {
    flex: 1;
    min-height: 0;
    background: linear-gradient(#241f49 0%, #212249 5%, #202b56 12%, #1d3961 25%, #1b486e 38%, #1a567b 51%, #18658a 64%, #156c90 72%, #146e92 100%);
}

.scene {
    width: 100%;
    height: 100%;
}

.axis {
    font-family: "Liberation Sans", sans-serif;
    font-size: 26px;
}

.blue {
    fill: #1414e6;
    stroke: #1414e6;
}

/* playback rail */
.rail {
    display: flex;
    flex-direction: column;
    align-items: center;
    gap: 16px;
    width: 73px;
    padding: 26px 2px 8px 0;
}

.round svg {
    width: 48px;
    height: 48px;
}

.exports {
    display: flex;
    flex-direction: column;
    align-items: center;
    gap: 18px;
    width: 54px;
    height: 386px;
    padding-top: 18px;
    border-top: 2px solid #d4d4d4;
    border-bottom: 2px solid #d4d4d4;
}

.export {
    writing-mode: vertical-rl;
    text-orientation: sideways;
}

.rail-more {
    margin: auto 0 0 -24px;
    border: 7px solid transparent;
    border-right: 8px solid #111;
    border-left: none;
}

/* navigator */
.navigator {
    display: flex;
    flex-direction: column;
    width: 549px;
    padding: 0 0 8px 17px;
    border-left: 2px solid #a4a8a8;
    font-size: 24px;
}

.nav-title {
    display: flex;
    align-items: center;
    gap: 22px;
    height: 57px;
    padding-left: 6px;
    font-size: 24px;
}

.pin-box {
    width: 24px;
    height: 22px;
    border: 2px solid #333;
    border-top-width: 4px;
}

.grid {
    display: flex;
    flex-direction: column;
    flex: 1;
    min-height: 0;
    overflow: hidden;
    border-left: 2px solid #ddd;
    border-top: 1px solid #ddd;
}

table {
    width: 100%;
    table-layout: fixed;
    border-collapse: separate;
    border-spacing: 0;
}

th {
    width: 48px;
    height: 44px;
    padding: 0;
    background: #eee;
    border-right: 2px solid #d8d8d8;
    border-bottom: 1px solid #d0d0d0;
    font-weight: normal;
}

th.name {
    width: 402px;
    padding-left: 12px;
    text-align: left;
}

th:last-child,
td:last-child {
    width: auto;
    border-right: none;
}

th:last-child {
    padding-left: 12px;
    text-align: left;
    white-space: nowrap;
}

.sort {
    display: inline-block;
    margin-left: 37px;
    border: 9px solid transparent;
    border-bottom: 10px solid #111;
    border-top: none;
    vertical-align: middle;
}

td {
    height: 40px;
    padding: 0;
    border-right: 2px solid #ebebeb;
    border-bottom: 2px solid #ebebeb;
}

tr:nth-child(even) td {
    background: #f7f7f7;
}

td > svg {
    margin: 0 auto;
}

.hist {
    width: 18px;
    height: 28px;
}

.node {
    display: flex;
    align-items: center;
    height: 38px;
    white-space: nowrap;
}

.node span {
    margin-left: 6px;
}

.lv1 {
    width: 40px;
    height: 40px;
}

.lv2 {
    width: 80px;
    height: 40px;
}

.lv2 + * {
    margin: 0 2px 0 0;
}

.node input {
    appearance: none;
    width: 28px;
    height: 28px;
    border: 2px solid #444;
    background: #fff;
}

.node input:checked::before {
    content: "";
    display: block;
    height: 100%;
    background: #4ae85a;
    clip-path: polygon(8% 50%, 22% 42%, 40% 66%, 84% 14%, 96% 24%, 42% 92%);
}

.strong {
    font-weight: bold;
}

.faded {
    color: #a4a4a4;
}

.letter {
    width: 32px;
    color: #25a9b8;
    font-family: "Liberation Serif", serif;
    font-size: 42px;
    text-align: center;
}

.blank {
    flex: 1;
    background:
        linear-gradient(#ebebeb, #ebebeb) 400px 0 / 2px 100% no-repeat,
        linear-gradient(#ebebeb, #ebebeb) 448px 0 / 2px 100% no-repeat,
        linear-gradient(#ebebeb, #ebebeb) 496px 0 / 2px 100% no-repeat,
        repeating-linear-gradient(#f7f7f7 0 38px, #ebebeb 38px 40px, #fdfdfd 40px 78px, #ebebeb 78px 80px);
}

.hscroll {
    display: flex;
    height: 38px;
    padding: 2px 0 6px 2px;
    border-left: 2px solid #ddd;
}

.hscroll svg {
    width: 34px;
    background: #f0f0f0;
}

.hscroll span {
    flex: 1;
    background: #cbcbcb;
}

.splitter {
    height: 12px;
    background: #d9d9d9;
    border: 2px solid #b0b0b0;
    border-right: none;
}

.panel {
    height: 48px;
    padding: 0 14px;
    border-bottom: 3px solid #cfcfcf;
    color: #2a6a7c;
    font-size: 28px;
}

/* sketch toolbar */
.sketchbar {
    height: 56px;
    border-bottom: 3px solid #b4b4b4;
}

.sketchbar .tool:first-child {
    margin-left: -25px;
}

.status {
    position: relative;
    display: flex;
    align-items: center;
    justify-content: center;
    height: 42px;
    color: #111;
    font-weight: 500;
}

.hint {
    position: absolute;
    left: 0;
}

.ime {
    position: absolute;
    right: 0;
    bottom: 0;
    display: flex;
    align-items: center;
    gap: 12px;
    width: 168px;
    height: 60px;
    color: #1a6fc4;
    font-size: 30px;
    font-weight: bold;
}

.ime svg {
    width: 62px;
    height: 60px;
}

/* taskbar */
.taskbar {
    display: flex;
    align-items: center;
    height: 60px;
    background: linear-gradient(90deg, #21363b, #22333e 50%, #1b2439);
    color: #fff;
    font-size: 24px;
}

.task-icon {
    width: 34px;
}

.task-icon svg {
    margin-left: -20px;
}

.task {
    gap: 8px;
    width: 304px;
    height: 60px;
    margin-right: 10px;
    padding: 0 8px;
    border-bottom: 4px solid #76b0e0;
}

.task.front {
    width: 320px;
    padding-left: 16px;
    background: #4f6067;
}

.tray {
    display: flex;
    align-items: center;
    gap: 16px;
    margin-left: auto;
    padding-right: 24px;
}

.lang {
    width: 42px;
    font-size: 26px;
    text-align: center;
}

.tray time {
    margin-left: 18px;
}
```
